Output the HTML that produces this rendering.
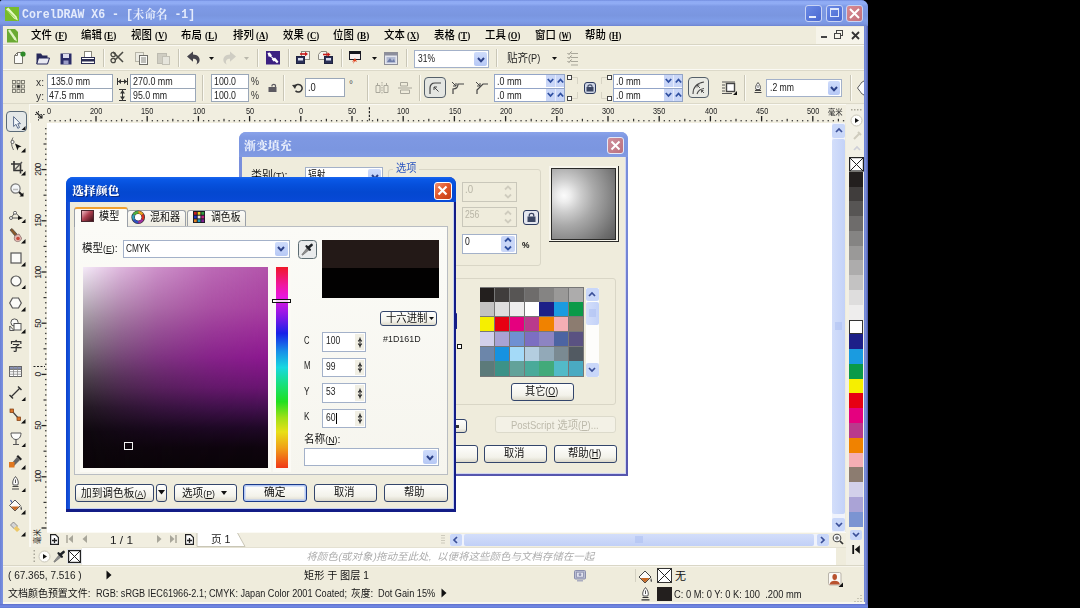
<!DOCTYPE html><html><head><meta charset="utf-8"><title>CorelDRAW X6</title><style>
*{box-sizing:border-box;margin:0;padding:0}
html,body{width:1080px;height:608px;overflow:hidden;background:#000}
body{position:relative;font-family:"Liberation Sans","Noto Sans CJK SC",sans-serif;font-size:11px;color:#111}
.a{position:absolute}
.t{position:absolute;white-space:nowrap;line-height:1}
.cj{font-family:"Liberation Sans","Noto Sans CJK SC",sans-serif}
.inp{position:absolute;background:#fff;border:1px solid #9aa7b8;font-size:11px;line-height:13px;padding-left:3px;white-space:nowrap;overflow:hidden;color:#222}
.btn{position:absolute;border:1px solid #33456b;border-radius:3px;background:linear-gradient(#fefefd,#f3f2ea 70%,#dcd9cb);text-align:center;white-space:nowrap;font-size:12px;color:#111}
.sep{position:absolute;width:1px;background:#c9c6b6}
</style></head><body>
<div class="a" style="left:0px;top:0px;width:868px;height:608px;background:#6f86d8;border-radius:3px 7px 0 0"></div>
<div class="a" style="left:0px;top:0px;width:868px;height:26px;border-radius:3px 7px 0 0;background:linear-gradient(#6a84d8 0%,#8eaaf4 4%,#90acf4 14%,#7e9ae6 24%,#7a96e0 60%,#7f9de8 80%,#7b95e0 92%,#6c84d2 100%)"></div>
<div class="a" style="left:3px;top:26px;width:861px;height:578px;background:#efecdc"></div>
<div class="t" style="left:22.4px;top:7.5px;font-size:12px;font-family:'Liberation Mono',monospace;font-weight:bold;color:#e4ebfc;transform-origin:0 50%;transform:scaleX(0.962)">CorelDRAW X6 - [<span style="font-family:'Liberation Serif','Noto Serif CJK SC',serif;font-size:12px;position:relative;top:1px">未命名</span> -1]</div>
<svg class="a" style="left:5px;top:6.5px;" width="14" height="14" viewBox="0 0 14 14"><rect width="14" height="14" fill="#78bc2a"/><path d="M1 2.200L3.300 0.500L11.500 9.500L13 13.500L9 11.500Z" fill="#e9fbc6"/><path d="M2.500 3.500L10.500 11" stroke="#8fcf3c" stroke-width="0.900"/></svg>
<div class="a" style="left:805px;top:5px;width:17px;height:17px;border:1px solid #c9d4f4;border-radius:3px;background:linear-gradient(135deg,#6a8ae6,#4a68d0)"><div class="a" style="left:3px;top:10px;width:7px;height:2px;background:#e8eefc"></div></div>
<div class="a" style="left:826px;top:5px;width:17px;height:17px;border:1px solid #c9d4f4;border-radius:3px;background:linear-gradient(135deg,#6a8ae6,#4a68d0)"><div class="a" style="left:3px;top:2px;width:9px;height:9px;border:1px solid #dfe7fb;border-top-width:2px"></div></div>
<div class="a" style="left:846px;top:5px;width:17px;height:17px;border:1px solid #c9d4f4;border-radius:3px;background:linear-gradient(135deg,#d98a92,#c2707c)"><svg class="a" style="left:2px;top:2px" width="11" height="11"><path d="M1 1L10 10M10 1L1 10" stroke="#fff" stroke-width="2"/></svg></div>
<div class="a" style="left:3px;top:26px;width:861px;height:18px;background:#efecdc"></div>
<div class="a" style="left:816px;top:27px;width:48px;height:17px;background:#f6f4ea"></div>
<svg class="a" style="left:7px;top:29px;" width="11" height="13.5" viewBox="0 0 11 13.5"><path d="M0 0H8L11 3V13.500H0Z" fill="#6aaa32"/><path d="M1 1.500L3 0.500L9 9L10 12.500L7 10.500Z" fill="#dff3c0"/></svg>
<div class="t" style="left:31.1px;top:30px;font-size:11.5px;color:#000;font-weight:500;transform-origin:0 50%;transform:scaleX(0.904)">文件</div>
<div class="t" style="left:54.6px;top:30.5px;font-size:10px;color:#000;font-family:'Liberation Serif',serif;font-weight:bold;transform-origin:0 50%;transform:scaleX(0.953)">(<u>F</u>)</div>
<div class="t" style="left:80.6px;top:30px;font-size:11.5px;color:#000;font-weight:500;transform-origin:0 50%;transform:scaleX(0.904)">编辑</div>
<div class="t" style="left:104.1px;top:30.5px;font-size:10px;color:#000;font-family:'Liberation Serif',serif;font-weight:bold;transform-origin:0 50%;transform:scaleX(0.913)">(<u>E</u>)</div>
<div class="t" style="left:131px;top:30px;font-size:11.5px;color:#000;font-weight:500;transform-origin:0 50%;transform:scaleX(0.904)">视图</div>
<div class="t" style="left:154.5px;top:30.5px;font-size:10px;color:#000;font-family:'Liberation Serif',serif;font-weight:bold;transform-origin:0 50%;transform:scaleX(0.876)">(<u>V</u>)</div>
<div class="t" style="left:181.3px;top:30px;font-size:11.5px;color:#000;font-weight:500;transform-origin:0 50%;transform:scaleX(0.904)">布局</div>
<div class="t" style="left:204.8px;top:30.5px;font-size:10px;color:#000;font-family:'Liberation Serif',serif;font-weight:bold;transform-origin:0 50%;transform:scaleX(0.913)">(<u>L</u>)</div>
<div class="t" style="left:232.6px;top:30px;font-size:11.5px;color:#000;font-weight:500;transform-origin:0 50%;transform:scaleX(0.904)">排列</div>
<div class="t" style="left:256.1px;top:30.5px;font-size:10px;color:#000;font-family:'Liberation Serif',serif;font-weight:bold;transform-origin:0 50%;transform:scaleX(0.876)">(<u>A</u>)</div>
<div class="t" style="left:283px;top:30px;font-size:11.5px;color:#000;font-weight:500;transform-origin:0 50%;transform:scaleX(0.904)">效果</div>
<div class="t" style="left:306.5px;top:30.5px;font-size:10px;color:#000;font-family:'Liberation Serif',serif;font-weight:bold;transform-origin:0 50%;transform:scaleX(0.876)">(<u>C</u>)</div>
<div class="t" style="left:333.4px;top:30px;font-size:11.5px;color:#000;font-weight:500;transform-origin:0 50%;transform:scaleX(0.904)">位图</div>
<div class="t" style="left:356.9px;top:30.5px;font-size:10px;color:#000;font-family:'Liberation Serif',serif;font-weight:bold;transform-origin:0 50%;transform:scaleX(0.913)">(<u>B</u>)</div>
<div class="t" style="left:383.8px;top:30px;font-size:11.5px;color:#000;font-weight:500;transform-origin:0 50%;transform:scaleX(0.904)">文本</div>
<div class="t" style="left:407.3px;top:30.5px;font-size:10px;color:#000;font-family:'Liberation Serif',serif;font-weight:bold;transform-origin:0 50%;transform:scaleX(0.876)">(<u>X</u>)</div>
<div class="t" style="left:434.2px;top:30px;font-size:11.5px;color:#000;font-weight:500;transform-origin:0 50%;transform:scaleX(0.904)">表格</div>
<div class="t" style="left:457.7px;top:30.5px;font-size:10px;color:#000;font-family:'Liberation Serif',serif;font-weight:bold;transform-origin:0 50%;transform:scaleX(0.913)">(<u>T</u>)</div>
<div class="t" style="left:484.6px;top:30px;font-size:11.5px;color:#000;font-weight:500;transform-origin:0 50%;transform:scaleX(0.904)">工具</div>
<div class="t" style="left:508.1px;top:30.5px;font-size:10px;color:#000;font-family:'Liberation Serif',serif;font-weight:bold;transform-origin:0 50%;transform:scaleX(0.843)">(<u>O</u>)</div>
<div class="t" style="left:535px;top:30px;font-size:11.5px;color:#000;font-weight:500;transform-origin:0 50%;transform:scaleX(0.904)">窗口</div>
<div class="t" style="left:558.5px;top:30.5px;font-size:10px;color:#000;font-family:'Liberation Serif',serif;font-weight:bold;transform-origin:0 50%;transform:scaleX(0.731)">(<u>W</u>)</div>
<div class="t" style="left:585.4px;top:30px;font-size:11.5px;color:#000;font-weight:500;transform-origin:0 50%;transform:scaleX(0.904)">帮助</div>
<div class="t" style="left:608.9px;top:30.5px;font-size:10px;color:#000;font-family:'Liberation Serif',serif;font-weight:bold;transform-origin:0 50%;transform:scaleX(0.843)">(<u>H</u>)</div>
<div class="a" style="left:821px;top:36px;width:6px;height:2px;background:#444"></div>
<svg class="a" style="left:834px;top:30px" width="10" height="10"><rect x="2.5" y="0.5" width="6" height="5" fill="none" stroke="#444"/><rect x="0.5" y="3.5" width="6" height="5" fill="#f6f4ea" stroke="#444"/></svg>
<svg class="a" style="left:851px;top:31px" width="9" height="9"><path d="M1 1L8 8M8 1L1 8" stroke="#333" stroke-width="1.8"/></svg>
<div class="a" style="left:3px;top:44px;width:861px;height:1px;background:#d8d5c4"></div>
<div class="a" style="left:3px;top:45px;width:861px;height:1px;background:#fbfaf4"></div>
<svg class="a" style="left:13px;top:51px;" width="13" height="14" viewBox="0 0 13 14"><path d="M1.5 4.5L4.5 1.5H9.5V12.5H1.5Z" fill="#fbfbf8" stroke="#77756c"/><path d="M1.5 4.5H4.5V1.5" fill="none" stroke="#77756c"/><circle cx="10" cy="3" r="2.6" fill="#2f8a2a"/></svg>
<svg class="a" style="left:36px;top:52px;" width="14" height="13" viewBox="0 0 14 13"><path d="M0.5 1.5H5L6.5 3.5H11.5V12H0.5Z" fill="#27295a"/><path d="M2.5 6H13.5L11.5 12H0.8Z" fill="#e9e9f2" stroke="#27295a"/></svg>
<svg class="a" style="left:60px;top:53px;" width="12" height="12" viewBox="0 0 12 12"><rect x="0.5" y="0.5" width="11" height="11" fill="#2a2c68"/><rect x="3" y="1" width="6" height="4" fill="#dcdcee"/><rect x="3.5" y="7.5" width="5" height="4" fill="#9a9cc8"/></svg>
<svg class="a" style="left:81px;top:51px;" width="14" height="14" viewBox="0 0 14 14"><rect x="3.5" y="0.5" width="7" height="6" fill="#fff" stroke="#8a887c"/><rect x="0.5" y="6.5" width="13" height="6" fill="#fdfdfb" stroke="#2a2c52"/><rect x="1" y="8" width="12" height="2.5" fill="#2a2c52"/></svg>
<div class="sep" style="left:103px;top:49px;height:18px"></div><div class="sep" style="left:104px;top:49px;height:18px;background:#fbfaf3"></div>
<svg class="a" style="left:110px;top:51px;" width="16" height="13" viewBox="0 0 16 13"><path d="M3 1L13 11M13 1L5 9" stroke="#4a4a44" stroke-width="1.6" fill="none"/><circle cx="3.2" cy="9.5" r="2.2" fill="none" stroke="#4a4a44" stroke-width="1.3"/><circle cx="3.2" cy="3.5" r="2.2" fill="none" stroke="#4a4a44" stroke-width="1.3"/></svg>
<svg class="a" style="left:135px;top:52px;" width="14" height="13" viewBox="0 0 14 13"><rect x="0.5" y="0.5" width="8" height="9" fill="#ecebe2" stroke="#b7b5a8"/><rect x="4.5" y="3.5" width="8" height="9" fill="#fafaf6" stroke="#6f6e68"/><path d="M6 6H11M6 8H11M6 10H11" stroke="#77766f" stroke-width="0.9"/></svg>
<svg class="a" style="left:157px;top:52px;" width="14" height="13" viewBox="0 0 14 13"><rect x="0.5" y="1.5" width="9" height="10" fill="#cfcdc2" stroke="#bdbbb0"/><rect x="5.5" y="4.5" width="7" height="8" fill="#e6e5dc" stroke="#c2c0b5"/></svg>
<div class="sep" style="left:178px;top:49px;height:18px"></div><div class="sep" style="left:179px;top:49px;height:18px;background:#fbfaf3"></div>
<svg class="a" style="left:186px;top:51px;" width="16" height="14" viewBox="0 0 16 14"><path d="M1 5.5L7 0.5V3.6C11.5 3.6 14 6.4 13.6 9.5C13.3 11.6 12 12.9 10.2 13.4C11.2 12.2 11.4 10.6 10.6 9.3C9.9 8.1 8.6 7.7 7 7.7V10.8Z" fill="#46444c"/></svg>
<svg class="a" style="left:209px;top:57px;" width="5" height="3" viewBox="0 0 5 3"><path d="M0 0H5L2.5 3Z" fill="#111"/></svg>
<svg class="a" style="left:221px;top:51px;" width="16" height="14" viewBox="0 0 16 14"><path d="M15 5.5L9 0.5V3.6C4.5 3.6 2 6.4 2.4 9.5C2.7 11.6 4 12.9 5.8 13.4C4.8 12.2 4.6 10.6 5.4 9.3C6.1 8.1 7.4 7.7 9 7.7V10.8Z" fill="#cfcdc3"/></svg>
<svg class="a" style="left:244px;top:57px;" width="5" height="3" viewBox="0 0 5 3"><path d="M0 0H5L2.5 3Z" fill="#b9b7ab"/></svg>
<div class="sep" style="left:257px;top:49px;height:18px"></div><div class="sep" style="left:258px;top:49px;height:18px;background:#fbfaf3"></div>
<svg class="a" style="left:265.8px;top:51.3px;" width="14" height="13.5" viewBox="0 0 14 13.5"><rect width="14" height="13.500" fill="#3c2082"/><path d="M1.500 2L3.800 1.500L6 4.500L5.200 5.300L8 7.300L9 6.500L12.500 10.800L11 12.300L8.500 10L7.600 10.500L5.600 8L6.400 7.200L3.600 5.500L2.700 5.700Z" fill="#fff"/></svg>
<div class="sep" style="left:288px;top:49px;height:18px"></div><div class="sep" style="left:289px;top:49px;height:18px;background:#fbfaf3"></div>
<svg class="a" style="left:296px;top:51px;" width="15" height="14" viewBox="0 0 15 14"><rect x="5.5" y="0.5" width="8" height="8" fill="#f4f4f0" stroke="#8c8a80"/><rect x="0.5" y="5.5" width="8" height="7" fill="#2a3058" stroke="#20243f"/><rect x="2" y="7" width="5" height="2.5" fill="#d8dcec"/><path d="M4 3H10" stroke="#c81a1a" stroke-width="1.6"/><path d="M9 0.8L12 3L9 5.2Z" fill="#c81a1a"/></svg>
<svg class="a" style="left:318px;top:51px;" width="15" height="14" viewBox="0 0 15 14"><path d="M0.5 3.5L3 0.5H8.5V8.5H0.5Z" fill="#f4f4f0" stroke="#8c8a80"/><rect x="6.500" y="5.5" width="8" height="7" fill="#2a3058" stroke="#20243f"/><rect x="8" y="7" width="5" height="2.5" fill="#d8dcec"/><path d="M5 3.500H10" stroke="#c81a1a" stroke-width="1.6"/><path d="M9.500 1.200L12.500 3.500L9.500 5.800Z" fill="#c81a1a"/></svg>
<div class="sep" style="left:341px;top:49px;height:18px"></div><div class="sep" style="left:342px;top:49px;height:18px;background:#fbfaf3"></div>
<svg class="a" style="left:349px;top:51px;" width="12" height="14" viewBox="0 0 12 14"><rect x="0.5" y="0.5" width="11" height="8" fill="#f7eef0" stroke="#1c1c28"/><rect x="0" y="0" width="12" height="3" fill="#15151f"/><path d="M6 7L8 11L6 10L4 13L5 10L3 11Z" fill="#e0401c"/></svg>
<svg class="a" style="left:372px;top:57px;" width="5" height="3" viewBox="0 0 5 3"><path d="M0 0H5L2.5 3Z" fill="#111"/></svg>
<svg class="a" style="left:384px;top:52px;" width="14" height="13" viewBox="0 0 14 13"><rect x="0.5" y="0.5" width="13" height="12" fill="#e4e6ee" stroke="#8e8f98"/><rect x="1" y="1" width="12" height="2.5" fill="#8c8e9c"/><rect x="2.500" y="5" width="9" height="6" fill="#b3bbd3"/><path d="M3 10L6 6L8 9L10 7L11 10Z" fill="#6f7da8"/></svg>
<div class="sep" style="left:406px;top:49px;height:18px"></div><div class="sep" style="left:407px;top:49px;height:18px;background:#fbfaf3"></div>
<div class="inp" style="left:414px;top:50px;width:75px;height:18px;border-color:#a3b1c9"></div>
<div class="t" style="left:417.6px;top:54.0px;font-size:10px;color:#222;transform-origin:0 50%;transform:scaleX(0.844)">31%</div>
<div class="a" style="left:474px;top:52px;width:13px;height:14px;background:linear-gradient(#cfdcfb,#b6c8f5);border-radius:2px"></div>
<svg class="a" style="left:476.5px;top:56.5px;" width="8" height="6" viewBox="0 0 8 6"><path d="M1 1L4 4.300L7 1" fill="none" stroke="#2a3f86" stroke-width="2"/></svg>
<div class="sep" style="left:496px;top:49px;height:18px"></div><div class="sep" style="left:497px;top:49px;height:18px;background:#fbfaf3"></div>
<div class="t" style="left:506.7px;top:53.0px;font-size:11.5px;color:#222;transform-origin:0 50%;transform:scaleX(0.916)">贴齐<span style="font-size:10px">(P)</span></div>
<svg class="a" style="left:552px;top:57px;" width="5" height="3" viewBox="0 0 5 3"><path d="M0 0H5L2.5 3Z" fill="#111"/></svg>
<svg class="a" style="left:567px;top:51px;" width="12" height="15" viewBox="0 0 12 15"><path d="M4 2.500H11M4 6.500H11M4 10.500H11M4 14H11" stroke="#a9a79a" stroke-width="1"/><path d="M0.5 2L2 3.500L4.500 0.5M0.5 6L2 7.500L4.500 4.500M0.5 10L2 11.500L4.500 8.500" stroke="#8d8b80" stroke-width="1" fill="none"/></svg>
<div class="a" style="left:3px;top:69px;width:861px;height:1px;background:#fbfaf4"></div>
<div class="a" style="left:3px;top:70px;width:861px;height:1px;background:#dcd9c9"></div>
<svg class="a" style="left:12px;top:80px;" width="13" height="14" viewBox="0 0 13 14"><rect x="0.5" y="0.5" width="3" height="3" fill="none" stroke="#77756c" stroke-width="0.9"/><rect x="5.0" y="0.5" width="3" height="3" fill="none" stroke="#77756c" stroke-width="0.9"/><rect x="9.5" y="0.5" width="3" height="3" fill="none" stroke="#77756c" stroke-width="0.9"/><rect x="0.5" y="5.0" width="3" height="3" fill="none" stroke="#77756c" stroke-width="0.9"/><rect x="5.0" y="5.0" width="3" height="3" fill="#222" stroke="#77756c" stroke-width="0.9"/><rect x="9.5" y="5.0" width="3" height="3" fill="none" stroke="#77756c" stroke-width="0.9"/><rect x="0.5" y="9.5" width="3" height="3" fill="none" stroke="#77756c" stroke-width="0.9"/><rect x="5.0" y="9.5" width="3" height="3" fill="none" stroke="#77756c" stroke-width="0.9"/><rect x="9.5" y="9.5" width="3" height="3" fill="none" stroke="#77756c" stroke-width="0.9"/></svg>
<div class="t" style="left:36px;top:77.0px;font-size:10.5px;color:#333;transform-origin:0 50%;transform:scaleX(0.979)">x:</div>
<div class="t" style="left:36px;top:91.2px;font-size:10.5px;color:#333;transform-origin:0 50%;transform:scaleX(0.979)">y:</div>
<div class="inp" style="left:47px;top:74px;width:66px;height:15px;"></div>
<div class="t" style="left:50.6px;top:77.2px;font-size:10px;color:#222;transform-origin:0 50%;transform:scaleX(0.877)">135.0 mm</div>
<div class="inp" style="left:47px;top:88px;width:66px;height:14px;"></div>
<div class="t" style="left:49.4px;top:91.4px;font-size:10px;color:#222;transform-origin:0 50%;transform:scaleX(0.900)">47.5 mm</div>
<svg class="a" style="left:117px;top:78px;" width="11" height="7" viewBox="0 0 11 7"><path d="M0.5 0V7M10.500 0V7M1 3.500H10" stroke="#333" stroke-width="1"/><path d="M1 3.500L4 1V6ZM10 3.500L7 1V6Z" fill="#333"/></svg>
<svg class="a" style="left:119px;top:89px;" width="7" height="12" viewBox="0 0 7 12"><path d="M0 0.5H7M0 11.500H7M3.500 1V11" stroke="#333" stroke-width="1"/><path d="M3.500 1L1 4.500H6ZM3.500 11L1 7.500H6Z" fill="#333"/></svg>
<div class="inp" style="left:130px;top:74px;width:66px;height:15px;"></div>
<div class="t" style="left:133.3px;top:77.2px;font-size:10px;color:#222;transform-origin:0 50%;transform:scaleX(0.893)">270.0 mm</div>
<div class="inp" style="left:130px;top:88px;width:66px;height:14px;"></div>
<div class="t" style="left:133.3px;top:91.4px;font-size:10px;color:#222;transform-origin:0 50%;transform:scaleX(0.879)">95.0 mm</div>
<div class="sep" style="left:202px;top:75px;height:26px"></div><div class="sep" style="left:203px;top:75px;height:26px;background:#fbfaf3"></div>
<div class="inp" style="left:211px;top:74px;width:38px;height:15px;"></div>
<div class="t" style="left:214px;top:77.2px;font-size:10px;color:#222;transform-origin:0 50%;transform:scaleX(0.879)">100.0</div>
<div class="inp" style="left:211px;top:88px;width:38px;height:14px;"></div>
<div class="t" style="left:214px;top:91.4px;font-size:10px;color:#222;transform-origin:0 50%;transform:scaleX(0.879)">100.0</div>
<div class="t" style="left:251px;top:76.2px;font-size:11px;color:#333;transform-origin:0 50%;transform:scaleX(0.818)">%</div>
<div class="t" style="left:251px;top:90.2px;font-size:11px;color:#333;transform-origin:0 50%;transform:scaleX(0.818)">%</div>
<svg class="a" style="left:268px;top:83px;" width="9" height="9" viewBox="0 0 9 9"><rect x="0.5" y="4" width="8" height="5" fill="#5b5960"/><path d="M4 3.500V2.500C4 1 7.500 1 7.500 2.500V4" fill="none" stroke="#5b5960" stroke-width="1.2"/></svg>
<div class="sep" style="left:283px;top:75px;height:26px"></div><div class="sep" style="left:284px;top:75px;height:26px;background:#fbfaf3"></div>
<svg class="a" style="left:292px;top:82px;" width="11" height="11" viewBox="0 0 11 11"><path d="M3 4.500A3.800 3.800 0 1 1 3.500 8.800" fill="none" stroke="#333" stroke-width="1.500"/><path d="M0 3L5 2.500L3 7Z" fill="#333"/></svg>
<div class="inp" style="left:305px;top:78px;width:40px;height:19px;"></div>
<div class="t" style="left:308.2px;top:82.5px;font-size:10px;color:#222;transform-origin:0 50%;transform:scaleX(0.935)">.0</div>
<div class="t" style="left:349px;top:80px;font-size:10px;color:#555">°</div>
<div class="sep" style="left:367px;top:75px;height:26px"></div><div class="sep" style="left:368px;top:75px;height:26px;background:#fbfaf3"></div>
<svg class="a" style="left:375px;top:82px;" width="14" height="12" viewBox="0 0 14 12"><path d="M7 0V12" stroke="#a9a79b" stroke-dasharray="1.500 1"/><path d="M1 3.500H5V10.500H1ZM9 3.500H13V10.500H9Z" fill="none" stroke="#a9a79b"/><path d="M2.500 3V1M11.500 3V1" stroke="#a9a79b"/></svg>
<svg class="a" style="left:398px;top:82px;" width="14" height="12" viewBox="0 0 14 12"><path d="M0 6H14" stroke="#a9a79b"/><path d="M2.500 0.5H9.500V4H2.500ZM2.500 8H11.500V11.500H2.500Z" fill="none" stroke="#a9a79b"/></svg>
<div class="sep" style="left:419px;top:75px;height:26px"></div><div class="sep" style="left:420px;top:75px;height:26px;background:#fbfaf3"></div>
<div class="a" style="left:424px;top:77px;width:22px;height:21px;border:1.500px solid #55606a;border-radius:4px;background:#e4e6e2"></div>
<svg class="a" style="left:429px;top:82px;" width="13" height="12" viewBox="0 0 13 12"><path d="M1 12V6C1 3 3 1 6 1H12" fill="none" stroke="#444" stroke-width="1.200"/><path d="M5 5L9.500 9.500M5 5V8M5 5H8" stroke="#444" stroke-width="1" fill="none"/></svg>
<svg class="a" style="left:451px;top:81px;" width="14" height="14" viewBox="0 0 14 14"><path d="M2 13V8C5 8 7 6 7 3H13" fill="none" stroke="#444" stroke-width="1.200"/><path d="M1 1L5 5M5 2V5H2" stroke="#444" fill="none"/></svg>
<svg class="a" style="left:475px;top:81px;" width="14" height="14" viewBox="0 0 14 14"><path d="M2 13V9L8 3H13" fill="none" stroke="#444" stroke-width="1.200"/><path d="M1 1L5 5M5 2V5H2" stroke="#444" fill="none"/></svg>
<div class="a" style="left:494px;top:74px;width:71px;height:28px;border:1px solid #93a5c8;background:#fff"></div>
<div class="a" style="left:494px;top:88px;width:71px;height:1px;background:#93a5c8"></div>
<div class="t" style="left:497.3px;top:77.2px;font-size:10px;color:#222;transform-origin:0 50%;transform:scaleX(0.889)">.0 mm</div>
<div class="a" style="left:546px;top:75px;width:18px;height:12px;background:#c9d6f7"></div>
<div class="a" style="left:555px;top:75px;width:1px;height:12px;background:#e6ecfb"></div>
<svg class="a" style="left:547px;top:78px;" width="7" height="6" viewBox="0 0 7 6"><path d="M0.800 1L3.500 4L6.200 1" fill="none" stroke="#2f4fa0" stroke-width="1.800"/></svg>
<svg class="a" style="left:556.5px;top:78px;" width="7" height="6" viewBox="0 0 7 6"><path d="M0.800 4.500L3.500 1.500L6.200 4.500" fill="none" stroke="#2f4fa0" stroke-width="1.800"/></svg>
<div class="t" style="left:497.3px;top:91.4px;font-size:10px;color:#222;transform-origin:0 50%;transform:scaleX(0.889)">.0 mm</div>
<div class="a" style="left:546px;top:89px;width:18px;height:12px;background:#c9d6f7"></div>
<div class="a" style="left:555px;top:89px;width:1px;height:12px;background:#e6ecfb"></div>
<svg class="a" style="left:547px;top:92px;" width="7" height="6" viewBox="0 0 7 6"><path d="M0.800 1L3.500 4L6.200 1" fill="none" stroke="#2f4fa0" stroke-width="1.800"/></svg>
<svg class="a" style="left:556.5px;top:92px;" width="7" height="6" viewBox="0 0 7 6"><path d="M0.800 4.500L3.500 1.500L6.200 4.500" fill="none" stroke="#2f4fa0" stroke-width="1.800"/></svg>
<svg class="a" style="left:567px;top:74px;" width="11" height="28" viewBox="0 0 11 28"><rect x="0.5" y="1.500" width="4" height="4" fill="#fff" stroke="#444"/><path d="M5 3.500H10.500V10" fill="none" stroke="#d6d3c4"/><rect x="0.5" y="22.500" width="4" height="4" fill="#fff" stroke="#444"/><path d="M5 24.500H10.500V18" fill="none" stroke="#d6d3c4"/></svg>
<div class="a" style="left:584px;top:82px;width:12px;height:12px;border:1px solid #2d3b5e;border-radius:3px;background:#cfd6e6"></div>
<svg class="a" style="left:586px;top:84px;" width="8" height="8" viewBox="0 0 8 8"><rect x="0.5" y="3" width="7" height="4.500" fill="#3b4663"/><path d="M2 3V2C2 0.5 6 0.5 6 2V3" fill="none" stroke="#3b4663" stroke-width="1.100"/></svg>
<svg class="a" style="left:601px;top:74px;" width="11" height="28" viewBox="0 0 11 28"><rect x="6.500" y="1.500" width="4" height="4" fill="#fff" stroke="#444"/><path d="M6 3.500H0.500V10" fill="none" stroke="#d6d3c4"/><rect x="6.500" y="22.500" width="4" height="4" fill="#fff" stroke="#444"/><path d="M6 24.500H0.500V18" fill="none" stroke="#d6d3c4"/></svg>
<div class="a" style="left:613px;top:74px;width:70px;height:28px;border:1px solid #93a5c8;background:#fff"></div>
<div class="a" style="left:613px;top:88px;width:70px;height:1px;background:#93a5c8"></div>
<div class="t" style="left:616.3px;top:77.2px;font-size:10px;color:#222;transform-origin:0 50%;transform:scaleX(0.889)">.0 mm</div>
<div class="a" style="left:664px;top:75px;width:18px;height:12px;background:#c9d6f7"></div>
<div class="a" style="left:673px;top:75px;width:1px;height:12px;background:#e6ecfb"></div>
<svg class="a" style="left:665px;top:78px;" width="7" height="6" viewBox="0 0 7 6"><path d="M0.800 1L3.500 4L6.200 1" fill="none" stroke="#2f4fa0" stroke-width="1.800"/></svg>
<svg class="a" style="left:674.5px;top:78px;" width="7" height="6" viewBox="0 0 7 6"><path d="M0.800 4.500L3.500 1.500L6.200 4.500" fill="none" stroke="#2f4fa0" stroke-width="1.800"/></svg>
<div class="t" style="left:616.3px;top:91.4px;font-size:10px;color:#222;transform-origin:0 50%;transform:scaleX(0.889)">.0 mm</div>
<div class="a" style="left:664px;top:89px;width:18px;height:12px;background:#c9d6f7"></div>
<div class="a" style="left:673px;top:89px;width:1px;height:12px;background:#e6ecfb"></div>
<svg class="a" style="left:665px;top:92px;" width="7" height="6" viewBox="0 0 7 6"><path d="M0.800 1L3.500 4L6.200 1" fill="none" stroke="#2f4fa0" stroke-width="1.800"/></svg>
<svg class="a" style="left:674.5px;top:92px;" width="7" height="6" viewBox="0 0 7 6"><path d="M0.800 4.500L3.500 1.500L6.200 4.500" fill="none" stroke="#2f4fa0" stroke-width="1.800"/></svg>
<div class="a" style="left:688px;top:77px;width:21px;height:21px;border:1.500px solid #55606a;border-radius:4px;background:#e9eae4"></div>
<svg class="a" style="left:692px;top:81px;" width="14" height="14" viewBox="0 0 14 14"><path d="M1 13C1 6 5 2 12 1" fill="none" stroke="#444" stroke-width="1.100"/><path d="M5 13C6 10 8 8 12 7.500" fill="none" stroke="#444" stroke-width="1.100"/><path d="M5 4L8 7M5 4H7.500M5 4V6.500M9.500 9.500L12 12M9.500 9.500H11.500M9.500 9.500V11.500" stroke="#444" stroke-width="0.900" fill="none"/></svg>
<svg class="a" style="left:722px;top:81px;" width="15" height="14" viewBox="0 0 15 14"><rect x="4.500" y="2.500" width="8" height="8" fill="#fff" stroke="#444" stroke-width="1.400"/><path d="M0 1H13M0 4H3M0 7H3M0 10H3M0 12.500H10" stroke="#555" stroke-width="1"/><path d="M15 10V14H11Z" fill="#111"/></svg>
<div class="sep" style="left:744px;top:75px;height:26px"></div><div class="sep" style="left:745px;top:75px;height:26px;background:#fbfaf3"></div>
<svg class="a" style="left:754px;top:82px;" width="8" height="11" viewBox="0 0 8 11"><path d="M4 0.500C6 3 7 5 6 7.500H2C1 5 2 3 4 0.500Z" fill="#fff" stroke="#444" stroke-width="0.900"/><path d="M4 3V6" stroke="#444" stroke-width="0.800"/><path d="M1 8.500H7M0.500 10.500H7.500" stroke="#444" stroke-width="1"/></svg>
<div class="inp" style="left:766px;top:79px;width:76px;height:18px;border-color:#a3b1c9"></div>
<div class="t" style="left:769.6px;top:83.2px;font-size:10px;color:#222;transform-origin:0 50%;transform:scaleX(0.864)">.2 mm</div>
<div class="a" style="left:828px;top:81px;width:12px;height:14px;background:linear-gradient(#cfdcfb,#b6c8f5);border-radius:2px"></div>
<svg class="a" style="left:830.0px;top:85.5px;" width="8" height="6" viewBox="0 0 8 6"><path d="M1 1L4 4.300L7 1" fill="none" stroke="#2a3f86" stroke-width="2"/></svg>
<div class="sep" style="left:850px;top:75px;height:26px"></div><div class="sep" style="left:851px;top:75px;height:26px;background:#fbfaf3"></div>
<svg class="a" style="left:857px;top:80px;" width="7" height="16" viewBox="0 0 7 16"><path d="M7 1C4 2 4 4 2 6L0.500 8L2 10C4 12 4 14 7 15" fill="#fff" stroke="#555"/></svg>
<div class="a" style="left:3px;top:103px;width:861px;height:1px;background:#dcd9c9"></div>
<div class="a" style="left:46.5px;top:122.7px;width:786px;height:409.3px;background:#fff"></div>
<div class="a" style="left:30px;top:104px;width:816.2px;height:19px;background:#f1eee0"></div>
<div class="a" style="left:30px;top:104px;width:816.2px;height:1px;background:#fbfaf4"></div>
<svg class="a" style="left:30px;top:104px;" width="818" height="19" viewBox="0 0 818 19"><rect x="19.3" y="16" width="1.300" height="1.400" fill="#444"/><rect x="24.4" y="16" width="1.300" height="1.400" fill="#444"/><rect x="29.6" y="16" width="1.300" height="1.400" fill="#444"/><rect x="34.7" y="16" width="1.300" height="1.400" fill="#444"/><rect x="39.8" y="14.800" width="1.200" height="2.600" fill="#333"/><rect x="44.9" y="16" width="1.300" height="1.400" fill="#444"/><rect x="50.0" y="16" width="1.300" height="1.400" fill="#444"/><rect x="55.2" y="16" width="1.300" height="1.400" fill="#444"/><rect x="60.3" y="16" width="1.300" height="1.400" fill="#444"/><path d="M66.0 12V17.400" stroke="#222" stroke-width="1.300"/><rect x="70.5" y="16" width="1.300" height="1.400" fill="#444"/><rect x="75.6" y="16" width="1.300" height="1.400" fill="#444"/><rect x="80.8" y="16" width="1.300" height="1.400" fill="#444"/><rect x="85.9" y="16" width="1.300" height="1.400" fill="#444"/><rect x="91.0" y="14.800" width="1.200" height="2.600" fill="#333"/><rect x="96.1" y="16" width="1.300" height="1.400" fill="#444"/><rect x="101.2" y="16" width="1.300" height="1.400" fill="#444"/><rect x="106.4" y="16" width="1.300" height="1.400" fill="#444"/><rect x="111.5" y="16" width="1.300" height="1.400" fill="#444"/><path d="M117.2 12V17.400" stroke="#222" stroke-width="1.300"/><rect x="121.7" y="16" width="1.300" height="1.400" fill="#444"/><rect x="126.8" y="16" width="1.300" height="1.400" fill="#444"/><rect x="132.0" y="16" width="1.300" height="1.400" fill="#444"/><rect x="137.1" y="16" width="1.300" height="1.400" fill="#444"/><rect x="142.2" y="14.800" width="1.200" height="2.600" fill="#333"/><rect x="147.3" y="16" width="1.300" height="1.400" fill="#444"/><rect x="152.4" y="16" width="1.300" height="1.400" fill="#444"/><rect x="157.6" y="16" width="1.300" height="1.400" fill="#444"/><rect x="162.7" y="16" width="1.300" height="1.400" fill="#444"/><path d="M168.4 12V17.400" stroke="#222" stroke-width="1.300"/><rect x="172.9" y="16" width="1.300" height="1.400" fill="#444"/><rect x="178.0" y="16" width="1.300" height="1.400" fill="#444"/><rect x="183.2" y="16" width="1.300" height="1.400" fill="#444"/><rect x="188.3" y="16" width="1.300" height="1.400" fill="#444"/><rect x="193.4" y="14.800" width="1.200" height="2.600" fill="#333"/><rect x="198.5" y="16" width="1.300" height="1.400" fill="#444"/><rect x="203.6" y="16" width="1.300" height="1.400" fill="#444"/><rect x="208.8" y="16" width="1.300" height="1.400" fill="#444"/><rect x="213.9" y="16" width="1.300" height="1.400" fill="#444"/><path d="M219.6 12V17.400" stroke="#222" stroke-width="1.300"/><rect x="224.1" y="16" width="1.300" height="1.400" fill="#444"/><rect x="229.2" y="16" width="1.300" height="1.400" fill="#444"/><rect x="234.4" y="16" width="1.300" height="1.400" fill="#444"/><rect x="239.5" y="16" width="1.300" height="1.400" fill="#444"/><rect x="244.6" y="14.800" width="1.200" height="2.600" fill="#333"/><rect x="249.7" y="16" width="1.300" height="1.400" fill="#444"/><rect x="254.8" y="16" width="1.300" height="1.400" fill="#444"/><rect x="260.0" y="16" width="1.300" height="1.400" fill="#444"/><rect x="265.1" y="16" width="1.300" height="1.400" fill="#444"/><path d="M270.8 12V17.400" stroke="#222" stroke-width="1.300"/><rect x="275.3" y="16" width="1.300" height="1.400" fill="#444"/><rect x="280.4" y="16" width="1.300" height="1.400" fill="#444"/><rect x="285.6" y="16" width="1.300" height="1.400" fill="#444"/><rect x="290.7" y="16" width="1.300" height="1.400" fill="#444"/><rect x="295.8" y="14.800" width="1.200" height="2.600" fill="#333"/><rect x="300.9" y="16" width="1.300" height="1.400" fill="#444"/><rect x="306.0" y="16" width="1.300" height="1.400" fill="#444"/><rect x="311.2" y="16" width="1.300" height="1.400" fill="#444"/><rect x="316.3" y="16" width="1.300" height="1.400" fill="#444"/><path d="M322.0 12V17.400" stroke="#222" stroke-width="1.300"/><rect x="326.5" y="16" width="1.300" height="1.400" fill="#444"/><rect x="331.6" y="16" width="1.300" height="1.400" fill="#444"/><rect x="336.8" y="16" width="1.300" height="1.400" fill="#444"/><rect x="341.9" y="16" width="1.300" height="1.400" fill="#444"/><rect x="347.0" y="14.800" width="1.200" height="2.600" fill="#333"/><rect x="352.1" y="16" width="1.300" height="1.400" fill="#444"/><rect x="357.2" y="16" width="1.300" height="1.400" fill="#444"/><rect x="362.4" y="16" width="1.300" height="1.400" fill="#444"/><rect x="367.5" y="16" width="1.300" height="1.400" fill="#444"/><path d="M373.2 12V17.400" stroke="#222" stroke-width="1.300"/><rect x="377.7" y="16" width="1.300" height="1.400" fill="#444"/><rect x="382.8" y="16" width="1.300" height="1.400" fill="#444"/><rect x="388.0" y="16" width="1.300" height="1.400" fill="#444"/><rect x="393.1" y="16" width="1.300" height="1.400" fill="#444"/><rect x="398.2" y="14.800" width="1.200" height="2.600" fill="#333"/><rect x="403.3" y="16" width="1.300" height="1.400" fill="#444"/><rect x="408.4" y="16" width="1.300" height="1.400" fill="#444"/><rect x="413.6" y="16" width="1.300" height="1.400" fill="#444"/><rect x="418.7" y="16" width="1.300" height="1.400" fill="#444"/><path d="M424.4 12V17.400" stroke="#222" stroke-width="1.300"/><rect x="428.9" y="16" width="1.300" height="1.400" fill="#444"/><rect x="434.0" y="16" width="1.300" height="1.400" fill="#444"/><rect x="439.2" y="16" width="1.300" height="1.400" fill="#444"/><rect x="444.3" y="16" width="1.300" height="1.400" fill="#444"/><rect x="449.4" y="14.800" width="1.200" height="2.600" fill="#333"/><rect x="454.5" y="16" width="1.300" height="1.400" fill="#444"/><rect x="459.6" y="16" width="1.300" height="1.400" fill="#444"/><rect x="464.8" y="16" width="1.300" height="1.400" fill="#444"/><rect x="469.9" y="16" width="1.300" height="1.400" fill="#444"/><path d="M475.6 12V17.400" stroke="#222" stroke-width="1.300"/><rect x="480.1" y="16" width="1.300" height="1.400" fill="#444"/><rect x="485.2" y="16" width="1.300" height="1.400" fill="#444"/><rect x="490.4" y="16" width="1.300" height="1.400" fill="#444"/><rect x="495.5" y="16" width="1.300" height="1.400" fill="#444"/><rect x="500.6" y="14.800" width="1.200" height="2.600" fill="#333"/><rect x="505.7" y="16" width="1.300" height="1.400" fill="#444"/><rect x="510.8" y="16" width="1.300" height="1.400" fill="#444"/><rect x="516.0" y="16" width="1.300" height="1.400" fill="#444"/><rect x="521.1" y="16" width="1.300" height="1.400" fill="#444"/><path d="M526.8 12V17.400" stroke="#222" stroke-width="1.300"/><rect x="531.3" y="16" width="1.300" height="1.400" fill="#444"/><rect x="536.4" y="16" width="1.300" height="1.400" fill="#444"/><rect x="541.6" y="16" width="1.300" height="1.400" fill="#444"/><rect x="546.7" y="16" width="1.300" height="1.400" fill="#444"/><rect x="551.8" y="14.800" width="1.200" height="2.600" fill="#333"/><rect x="556.9" y="16" width="1.300" height="1.400" fill="#444"/><rect x="562.0" y="16" width="1.300" height="1.400" fill="#444"/><rect x="567.2" y="16" width="1.300" height="1.400" fill="#444"/><rect x="572.3" y="16" width="1.300" height="1.400" fill="#444"/><path d="M578.0 12V17.400" stroke="#222" stroke-width="1.300"/><rect x="582.5" y="16" width="1.300" height="1.400" fill="#444"/><rect x="587.6" y="16" width="1.300" height="1.400" fill="#444"/><rect x="592.8" y="16" width="1.300" height="1.400" fill="#444"/><rect x="597.9" y="16" width="1.300" height="1.400" fill="#444"/><rect x="603.0" y="14.800" width="1.200" height="2.600" fill="#333"/><rect x="608.1" y="16" width="1.300" height="1.400" fill="#444"/><rect x="613.2" y="16" width="1.300" height="1.400" fill="#444"/><rect x="618.4" y="16" width="1.300" height="1.400" fill="#444"/><rect x="623.5" y="16" width="1.300" height="1.400" fill="#444"/><path d="M629.2 12V17.400" stroke="#222" stroke-width="1.300"/><rect x="633.7" y="16" width="1.300" height="1.400" fill="#444"/><rect x="638.8" y="16" width="1.300" height="1.400" fill="#444"/><rect x="644.0" y="16" width="1.300" height="1.400" fill="#444"/><rect x="649.1" y="16" width="1.300" height="1.400" fill="#444"/><rect x="654.2" y="14.800" width="1.200" height="2.600" fill="#333"/><rect x="659.3" y="16" width="1.300" height="1.400" fill="#444"/><rect x="664.4" y="16" width="1.300" height="1.400" fill="#444"/><rect x="669.6" y="16" width="1.300" height="1.400" fill="#444"/><rect x="674.7" y="16" width="1.300" height="1.400" fill="#444"/><path d="M680.4 12V17.400" stroke="#222" stroke-width="1.300"/><rect x="684.9" y="16" width="1.300" height="1.400" fill="#444"/><rect x="690.0" y="16" width="1.300" height="1.400" fill="#444"/><rect x="695.2" y="16" width="1.300" height="1.400" fill="#444"/><rect x="700.3" y="16" width="1.300" height="1.400" fill="#444"/><rect x="705.4" y="14.800" width="1.200" height="2.600" fill="#333"/><rect x="710.5" y="16" width="1.300" height="1.400" fill="#444"/><rect x="715.6" y="16" width="1.300" height="1.400" fill="#444"/><rect x="720.8" y="16" width="1.300" height="1.400" fill="#444"/><rect x="725.9" y="16" width="1.300" height="1.400" fill="#444"/><path d="M731.6 12V17.400" stroke="#222" stroke-width="1.300"/><rect x="736.1" y="16" width="1.300" height="1.400" fill="#444"/><rect x="741.2" y="16" width="1.300" height="1.400" fill="#444"/><rect x="746.4" y="16" width="1.300" height="1.400" fill="#444"/><rect x="751.5" y="16" width="1.300" height="1.400" fill="#444"/><rect x="756.6" y="14.800" width="1.200" height="2.600" fill="#333"/><rect x="761.7" y="16" width="1.300" height="1.400" fill="#444"/><rect x="766.8" y="16" width="1.300" height="1.400" fill="#444"/><rect x="772.0" y="16" width="1.300" height="1.400" fill="#444"/><rect x="777.1" y="16" width="1.300" height="1.400" fill="#444"/><path d="M782.8 12V17.400" stroke="#222" stroke-width="1.300"/><rect x="787.3" y="16" width="1.300" height="1.400" fill="#444"/><rect x="792.4" y="16" width="1.300" height="1.400" fill="#444"/><rect x="797.6" y="16" width="1.300" height="1.400" fill="#444"/><rect x="802.7" y="16" width="1.300" height="1.400" fill="#444"/><rect x="807.8" y="14.800" width="1.200" height="2.600" fill="#333"/><rect x="812.9" y="16" width="1.300" height="1.400" fill="#444"/><path d="M339.400 3.200V16.500" stroke="#222" stroke-width="1.200" stroke-dasharray="2.200 1.600"/></svg>
<div class="t" style="left:47.3px;top:107.4px;font-size:9px;color:#222;transform-origin:0 50%;transform:scaleX(0.817)">0</div>
<div class="t" style="left:90.1px;top:107.4px;font-size:9px;color:#222;transform-origin:0 50%;transform:scaleX(0.818)">200</div>
<div class="t" style="left:141.3px;top:107.4px;font-size:9px;color:#222;transform-origin:0 50%;transform:scaleX(0.818)">150</div>
<div class="t" style="left:192.6px;top:107.4px;font-size:9px;color:#222;transform-origin:0 50%;transform:scaleX(0.818)">100</div>
<div class="t" style="left:245.8px;top:107.4px;font-size:9px;color:#222;transform-origin:0 50%;transform:scaleX(0.819)">50</div>
<div class="t" style="left:299.1px;top:107.4px;font-size:9px;color:#222;transform-origin:0 50%;transform:scaleX(0.817)">0</div>
<div class="t" style="left:348.2px;top:107.4px;font-size:9px;color:#222;transform-origin:0 50%;transform:scaleX(0.819)">50</div>
<div class="t" style="left:397.4px;top:107.4px;font-size:9px;color:#222;transform-origin:0 50%;transform:scaleX(0.818)">100</div>
<div class="t" style="left:448.6px;top:107.4px;font-size:9px;color:#222;transform-origin:0 50%;transform:scaleX(0.818)">150</div>
<div class="t" style="left:499.8px;top:107.4px;font-size:9px;color:#222;transform-origin:0 50%;transform:scaleX(0.818)">200</div>
<div class="t" style="left:550.9px;top:107.4px;font-size:9px;color:#222;transform-origin:0 50%;transform:scaleX(0.818)">250</div>
<div class="t" style="left:602.1px;top:107.4px;font-size:9px;color:#222;transform-origin:0 50%;transform:scaleX(0.818)">300</div>
<div class="t" style="left:653.4px;top:107.4px;font-size:9px;color:#222;transform-origin:0 50%;transform:scaleX(0.818)">350</div>
<div class="t" style="left:704.6px;top:107.4px;font-size:9px;color:#222;transform-origin:0 50%;transform:scaleX(0.818)">400</div>
<div class="t" style="left:755.8px;top:107.4px;font-size:9px;color:#222;transform-origin:0 50%;transform:scaleX(0.818)">450</div>
<div class="t" style="left:806.9px;top:107.4px;font-size:9px;color:#222;transform-origin:0 50%;transform:scaleX(0.818)">500</div>
<div class="t" style="left:828px;top:108.5px;font-size:8px;color:#222;transform-origin:0 50%;transform:scaleX(0.919)">毫米</div>
<svg class="a" style="left:34px;top:109.5px;" width="12" height="12" viewBox="0 0 12 12"><path d="M1 4.500H11M4.500 1V11" stroke="#333" stroke-dasharray="1.500 1.200"/><path d="M2 2L8 8M8 5V8H5" stroke="#222" fill="none" stroke-width="1.100"/></svg>
<div class="a" style="left:30px;top:123px;width:17px;height:424px;background:#f1eee0"></div>
<div class="a" style="left:30px;top:123px;width:1px;height:424px;background:#fbfaf4"></div>
<svg class="a" style="left:30px;top:123px;" width="17" height="424" viewBox="0 0 17 424"><rect x="15" y="5.0" width="1.500" height="1.300" fill="#444"/><rect x="15" y="10.2" width="1.500" height="1.300" fill="#444"/><rect x="15" y="15.3" width="1.500" height="1.300" fill="#444"/><rect x="13.500" y="20.4" width="3" height="1.200" fill="#333"/><rect x="15" y="25.5" width="1.500" height="1.300" fill="#444"/><rect x="15" y="30.6" width="1.500" height="1.300" fill="#444"/><rect x="15" y="35.8" width="1.500" height="1.300" fill="#444"/><rect x="15" y="40.9" width="1.500" height="1.300" fill="#444"/><path d="M11.500 46.6H16.500" stroke="#222" stroke-width="1.300"/><rect x="15" y="51.1" width="1.500" height="1.300" fill="#444"/><rect x="15" y="56.2" width="1.500" height="1.300" fill="#444"/><rect x="15" y="61.4" width="1.500" height="1.300" fill="#444"/><rect x="15" y="66.5" width="1.500" height="1.300" fill="#444"/><rect x="13.500" y="71.6" width="3" height="1.200" fill="#333"/><rect x="15" y="76.7" width="1.500" height="1.300" fill="#444"/><rect x="15" y="81.8" width="1.500" height="1.300" fill="#444"/><rect x="15" y="87.0" width="1.500" height="1.300" fill="#444"/><rect x="15" y="92.1" width="1.500" height="1.300" fill="#444"/><path d="M11.500 97.8H16.500" stroke="#222" stroke-width="1.300"/><rect x="15" y="102.3" width="1.500" height="1.300" fill="#444"/><rect x="15" y="107.4" width="1.500" height="1.300" fill="#444"/><rect x="15" y="112.6" width="1.500" height="1.300" fill="#444"/><rect x="15" y="117.7" width="1.500" height="1.300" fill="#444"/><rect x="13.500" y="122.8" width="3" height="1.200" fill="#333"/><rect x="15" y="127.9" width="1.500" height="1.300" fill="#444"/><rect x="15" y="133.0" width="1.500" height="1.300" fill="#444"/><rect x="15" y="138.2" width="1.500" height="1.300" fill="#444"/><rect x="15" y="143.3" width="1.500" height="1.300" fill="#444"/><path d="M11.500 149.0H16.500" stroke="#222" stroke-width="1.300"/><rect x="15" y="153.5" width="1.500" height="1.300" fill="#444"/><rect x="15" y="158.6" width="1.500" height="1.300" fill="#444"/><rect x="15" y="163.8" width="1.500" height="1.300" fill="#444"/><rect x="15" y="168.9" width="1.500" height="1.300" fill="#444"/><rect x="13.500" y="174.0" width="3" height="1.200" fill="#333"/><rect x="15" y="179.1" width="1.500" height="1.300" fill="#444"/><rect x="15" y="184.2" width="1.500" height="1.300" fill="#444"/><rect x="15" y="189.4" width="1.500" height="1.300" fill="#444"/><rect x="15" y="194.5" width="1.500" height="1.300" fill="#444"/><path d="M11.500 200.2H16.500" stroke="#222" stroke-width="1.300"/><rect x="15" y="204.7" width="1.500" height="1.300" fill="#444"/><rect x="15" y="209.8" width="1.500" height="1.300" fill="#444"/><rect x="15" y="215.0" width="1.500" height="1.300" fill="#444"/><rect x="15" y="220.1" width="1.500" height="1.300" fill="#444"/><rect x="13.500" y="225.2" width="3" height="1.200" fill="#333"/><rect x="15" y="230.3" width="1.500" height="1.300" fill="#444"/><rect x="15" y="235.4" width="1.500" height="1.300" fill="#444"/><rect x="15" y="240.6" width="1.500" height="1.300" fill="#444"/><rect x="15" y="245.7" width="1.500" height="1.300" fill="#444"/><path d="M11.500 251.4H16.500" stroke="#222" stroke-width="1.300"/><rect x="15" y="255.9" width="1.500" height="1.300" fill="#444"/><rect x="15" y="261.0" width="1.500" height="1.300" fill="#444"/><rect x="15" y="266.2" width="1.500" height="1.300" fill="#444"/><rect x="15" y="271.3" width="1.500" height="1.300" fill="#444"/><rect x="13.500" y="276.4" width="3" height="1.200" fill="#333"/><rect x="15" y="281.5" width="1.500" height="1.300" fill="#444"/><rect x="15" y="286.6" width="1.500" height="1.300" fill="#444"/><rect x="15" y="291.8" width="1.500" height="1.300" fill="#444"/><rect x="15" y="296.9" width="1.500" height="1.300" fill="#444"/><path d="M11.500 302.6H16.500" stroke="#222" stroke-width="1.300"/><rect x="15" y="307.1" width="1.500" height="1.300" fill="#444"/><rect x="15" y="312.2" width="1.500" height="1.300" fill="#444"/><rect x="15" y="317.4" width="1.500" height="1.300" fill="#444"/><rect x="15" y="322.5" width="1.500" height="1.300" fill="#444"/><rect x="13.500" y="327.6" width="3" height="1.200" fill="#333"/><rect x="15" y="332.7" width="1.500" height="1.300" fill="#444"/><rect x="15" y="337.8" width="1.500" height="1.300" fill="#444"/><rect x="15" y="343.0" width="1.500" height="1.300" fill="#444"/><rect x="15" y="348.1" width="1.500" height="1.300" fill="#444"/><path d="M11.500 353.8H16.500" stroke="#222" stroke-width="1.300"/><rect x="15" y="358.3" width="1.500" height="1.300" fill="#444"/><rect x="15" y="363.4" width="1.500" height="1.300" fill="#444"/><rect x="15" y="368.6" width="1.500" height="1.300" fill="#444"/><rect x="15" y="373.7" width="1.500" height="1.300" fill="#444"/><rect x="13.500" y="378.8" width="3" height="1.200" fill="#333"/><rect x="15" y="383.9" width="1.500" height="1.300" fill="#444"/><rect x="15" y="389.0" width="1.500" height="1.300" fill="#444"/><rect x="15" y="394.2" width="1.500" height="1.300" fill="#444"/><rect x="15" y="399.3" width="1.500" height="1.300" fill="#444"/><path d="M11.500 405.0H16.500" stroke="#222" stroke-width="1.300"/><path d="M3.500 243.500H15" stroke="#222" stroke-width="1.100" stroke-dasharray="2 1.500"/></svg>
<div class="t" style="left:23.299999999999997px;top:165.1px;width:30px;height:9px;text-align:center;font-size:8.500px;color:#222;letter-spacing:-0.600px;transform:rotate(-90deg)">200</div>
<div class="t" style="left:23.299999999999997px;top:216.3px;width:30px;height:9px;text-align:center;font-size:8.500px;color:#222;letter-spacing:-0.600px;transform:rotate(-90deg)">150</div>
<div class="t" style="left:23.299999999999997px;top:267.5px;width:30px;height:9px;text-align:center;font-size:8.500px;color:#222;letter-spacing:-0.600px;transform:rotate(-90deg)">100</div>
<div class="t" style="left:23.299999999999997px;top:318.7px;width:30px;height:9px;text-align:center;font-size:8.500px;color:#222;letter-spacing:-0.600px;transform:rotate(-90deg)">50</div>
<div class="t" style="left:23.299999999999997px;top:369.9px;width:30px;height:9px;text-align:center;font-size:8.500px;color:#222;letter-spacing:-0.600px;transform:rotate(-90deg)">0</div>
<div class="t" style="left:23.299999999999997px;top:421.1px;width:30px;height:9px;text-align:center;font-size:8.500px;color:#222;letter-spacing:-0.600px;transform:rotate(-90deg)">50</div>
<div class="t" style="left:23.299999999999997px;top:472.3px;width:30px;height:9px;text-align:center;font-size:8.500px;color:#222;letter-spacing:-0.600px;transform:rotate(-90deg)">100</div>
<div class="t" style="left:23.299999999999997px;top:532.0px;width:30px;height:9px;text-align:center;font-size:7.500px;color:#222;letter-spacing:0;transform:rotate(-90deg)">毫米</div>
<div class="a" style="left:3px;top:104px;width:27px;height:461px;background:#efecdc"></div>
<div class="a" style="left:29px;top:104px;width:1px;height:443px;background:#f9f8f1"></div>
<div class="a" style="left:5.800px;top:111px;width:21px;height:20.600px;border:1.500px solid #5a6a78;border-radius:4px;background:#e4e8e8"></div>
<svg class="a" style="left:12.8px;top:115.6px;" width="8" height="13" viewBox="0 0 8 13"><path d="M0.600 0.600V10.500L3 8.300L4.800 12.300L6.500 11.500L4.800 7.700H7.500Z" fill="#f4f8fc" stroke="#5a6c8c" stroke-width="1"/></svg>
<svg class="a" style="left:21.2px;top:125.5px;" width="4.5" height="4.5" viewBox="0 0 4.5 4.5"><path d="M4.500 0V4.500H0Z" fill="#111"/></svg>
<svg class="a" style="left:10.0px;top:137.0px;" width="12" height="14" viewBox="0 0 12 14"><path d="M3 0.500C1 4 1 8 3.500 13" fill="none" stroke="#666" stroke-width="1"/><circle cx="2.500" cy="5" r="1.600" fill="#fff" stroke="#444" stroke-width="0.800"/><path d="M5 6.500L11.500 9.500L8.500 10.500L7.500 13.500Z" fill="#111"/></svg>
<svg class="a" style="left:21.2px;top:148.2px;" width="4.5" height="4.5" viewBox="0 0 4.5 4.5"><path d="M4.500 0V4.500H0Z" fill="#111"/></svg>
<svg class="a" style="left:10.5px;top:160.5px;" width="12" height="13" viewBox="0 0 12 13"><path d="M3 0V9.500H12M0 3H9.500V12.500" fill="none" stroke="#333" stroke-width="1.600"/><path d="M11 1L3.500 9" stroke="#555" stroke-width="1.300"/></svg>
<svg class="a" style="left:21.2px;top:171.2px;" width="4.5" height="4.5" viewBox="0 0 4.5 4.5"><path d="M4.500 0V4.500H0Z" fill="#111"/></svg>
<svg class="a" style="left:9.5px;top:183.0px;" width="14" height="14" viewBox="0 0 14 14"><circle cx="5.500" cy="5.500" r="4.600" fill="#f4f6f8" stroke="#777" stroke-width="1.200"/><path d="M3 6.500H8" stroke="#bbb" stroke-width="1.500"/><path d="M9 9L12 12" stroke="#222" stroke-width="2"/><path d="M13.500 9.500V13.500H9.500Z" fill="#111"/></svg>
<svg class="a" style="left:9.0px;top:211.0px;" width="14" height="9" viewBox="0 0 14 9"><path d="M2 7L6 1.500L12 7Z" fill="none" stroke="#555" stroke-width="1"/><circle cx="6" cy="1.800" r="1.500" fill="#fff" stroke="#444" stroke-width="0.800"/><circle cx="2" cy="7" r="1.500" fill="#fff" stroke="#444" stroke-width="0.800"/><path d="M9 5L14 7L9 9Z" fill="#111"/></svg>
<svg class="a" style="left:21.2px;top:218.7px;" width="4.5" height="4.5" viewBox="0 0 4.5 4.5"><path d="M4.500 0V4.500H0Z" fill="#111"/></svg>
<svg class="a" style="left:8.5px;top:227.5px;" width="14" height="15" viewBox="0 0 14 15"><path d="M1 2L3 0.500L8 6L6 8Z" fill="#8a5a2a" stroke="#444" stroke-width="0.700"/><path d="M6 7.500L10 6L12.500 10C12.500 13 9 14.500 6.500 13C5 12 5 9.500 6 7.500Z" fill="#e2b8b0" stroke="#806060" stroke-width="0.700"/><circle cx="9" cy="10.500" r="1.800" fill="#c84a3a"/></svg>
<svg class="a" style="left:21.2px;top:239.2px;" width="4.5" height="4.5" viewBox="0 0 4.5 4.5"><path d="M4.500 0V4.500H0Z" fill="#111"/></svg>
<svg class="a" style="left:9.5px;top:251.8px;" width="12" height="12" viewBox="0 0 12 12"><rect x="1" y="1" width="10" height="10" fill="#fbfbf8" stroke="#555" stroke-width="1.200"/></svg>
<svg class="a" style="left:21.2px;top:262.0px;" width="4.5" height="4.5" viewBox="0 0 4.5 4.5"><path d="M4.500 0V4.500H0Z" fill="#111"/></svg>
<svg class="a" style="left:9.5px;top:274.5px;" width="12" height="12" viewBox="0 0 12 12"><circle cx="6" cy="6" r="5" fill="#fbfbf8" stroke="#555" stroke-width="1.200"/></svg>
<svg class="a" style="left:21.2px;top:284.7px;" width="4.5" height="4.5" viewBox="0 0 4.5 4.5"><path d="M4.500 0V4.500H0Z" fill="#111"/></svg>
<svg class="a" style="left:9.0px;top:297.0px;" width="13" height="12" viewBox="0 0 13 12"><path d="M3.500 1H9.500L12.300 6L9.500 11H3.500L0.700 6Z" fill="#fbfbf8" stroke="#555" stroke-width="1.200"/></svg>
<svg class="a" style="left:21.2px;top:307.2px;" width="4.5" height="4.5" viewBox="0 0 4.5 4.5"><path d="M4.500 0V4.500H0Z" fill="#111"/></svg>
<svg class="a" style="left:9.0px;top:318.3px;" width="13" height="13" viewBox="0 0 13 13"><circle cx="5.500" cy="4.500" r="3.600" fill="#fbfbf8" stroke="#555"/><rect x="5" y="5.500" width="7" height="6.500" fill="#fbfbf8" stroke="#555"/><path d="M0.800 8L5 12.500H0.800Z" fill="#fbfbf8" stroke="#555"/></svg>
<svg class="a" style="left:21.2px;top:329.0px;" width="4.5" height="4.5" viewBox="0 0 4.5 4.5"><path d="M4.500 0V4.500H0Z" fill="#111"/></svg>
<div class="t" style="left:10.3px;top:340.8px;font-size:12.5px;color:#333;font-weight:500;transform-origin:0 50%;transform:scaleX(0.991)">字</div>
<svg class="a" style="left:9.0px;top:365.7px;" width="13" height="11" viewBox="0 0 13 11"><rect x="0.500" y="0.500" width="12" height="10" fill="#fff" stroke="#666"/><rect x="0.500" y="0.500" width="12" height="2.800" fill="#8a93b8" stroke="#666"/><path d="M0.500 5.700H12.500M0.500 8.200H12.500M4.500 0.500V10.500M8.500 0.500V10.500" stroke="#888" stroke-width="0.800"/></svg>
<svg class="a" style="left:9.0px;top:385.8px;" width="13" height="13" viewBox="0 0 13 13"><path d="M2 11L11 2" stroke="#333" stroke-width="1.200"/><path d="M0.500 9L4 12.500M9 0.500L12.500 4" stroke="#333" stroke-width="1.400"/></svg>
<svg class="a" style="left:21.2px;top:396.5px;" width="4.5" height="4.5" viewBox="0 0 4.5 4.5"><path d="M4.500 0V4.500H0Z" fill="#111"/></svg>
<svg class="a" style="left:9.0px;top:408.0px;" width="13" height="14" viewBox="0 0 13 14"><path d="M3 3L10 11" stroke="#444" stroke-width="1.200"/><rect x="1" y="1" width="3.600" height="3.600" fill="#d9742a" stroke="#7a3a10" stroke-width="0.700"/><rect x="8" y="9" width="3.600" height="3.600" fill="#d9742a" stroke="#7a3a10" stroke-width="0.700"/></svg>
<svg class="a" style="left:21.2px;top:419.2px;" width="4.5" height="4.5" viewBox="0 0 4.5 4.5"><path d="M4.500 0V4.500H0Z" fill="#111"/></svg>
<svg class="a" style="left:9.5px;top:431.5px;" width="12" height="14" viewBox="0 0 12 14"><path d="M1 1H11C11 5.500 8.500 7.500 6 7.500C3.500 7.500 1 5.500 1 1Z" fill="#fdfdfb" stroke="#555"/><path d="M6 7.500V12M3 12.500H9" stroke="#555" stroke-width="1.200"/></svg>
<svg class="a" style="left:21.2px;top:442.7px;" width="4.5" height="4.5" viewBox="0 0 4.5 4.5"><path d="M4.500 0V4.500H0Z" fill="#111"/></svg>
<svg class="a" style="left:8.5px;top:453.8px;" width="14" height="14" viewBox="0 0 14 14"><path d="M8 3L11 6L5 12L2.500 12L2.500 9.500Z" fill="#666"/><path d="M9 1L13 5L11.500 6.500L7.500 2.500Z" fill="#222"/><rect x="0" y="8" width="5.500" height="5.500" fill="#e07820"/></svg>
<svg class="a" style="left:21.2px;top:465.0px;" width="4.5" height="4.5" viewBox="0 0 4.5 4.5"><path d="M4.500 0V4.500H0Z" fill="#111"/></svg>
<svg class="a" style="left:11.0px;top:476.0px;" width="9" height="14" viewBox="0 0 9 14"><path d="M4.500 0.500C7 3.500 8 6.500 6.800 9H2.200C1 6.500 2 3.500 4.500 0.500Z" fill="#fff" stroke="#555"/><path d="M4.500 3.500V7" stroke="#555"/><path d="M1.500 10.500H7.500M1 13H8" stroke="#444" stroke-width="1.200"/></svg>
<svg class="a" style="left:21.2px;top:487.7px;" width="4.5" height="4.5" viewBox="0 0 4.5 4.5"><path d="M4.500 0V4.500H0Z" fill="#111"/></svg>
<svg class="a" style="left:8.0px;top:498.5px;" width="15" height="14" viewBox="0 0 15 14"><path d="M1.500 6.500L7 1L12.500 6.500L7 12Z" fill="#fbfbf8" stroke="#555"/><path d="M3 7.500H11L7 11.500Z" fill="#c86a24"/><path d="M13 7C14 9 14.500 10 13.500 11C12.500 11 12 9 13 7Z" fill="#555"/><path d="M4 3.500L2.500 1" stroke="#3a58a8" stroke-width="1.200"/></svg>
<svg class="a" style="left:21.2px;top:510.2px;" width="4.5" height="4.5" viewBox="0 0 4.5 4.5"><path d="M4.500 0V4.500H0Z" fill="#111"/></svg>
<svg class="a" style="left:9.0px;top:521.0px;" width="13" height="13" viewBox="0 0 13 13"><path d="M1.500 4L4.500 1L8.500 5L5.500 8Z" fill="#d4d4d4" stroke="#777" stroke-width="0.800"/><path d="M4.500 7.500L8 11L11 8.500L7.500 5Z" fill="#ecc868"/></svg>
<svg class="a" style="left:21.2px;top:532.2px;" width="4.5" height="4.5" viewBox="0 0 4.5 4.5"><path d="M4.500 0V4.500H0Z" fill="#111"/></svg>
<div class="a" style="left:832.3px;top:122.7px;width:13.2px;height:409px;background:#f0f3fc"></div>
<div class="a" style="left:832.3px;top:123.5px;width:12.9px;height:14px;background:#c9d7f9;border-radius:2px"></div>
<svg class="a" style="left:834.8px;top:126.5px;" width="8" height="8" viewBox="0 0 8 8"><path d="M1 5L4 2L7 5" fill="none" stroke="#3a4f98" stroke-width="1.700"/></svg>
<div class="a" style="left:832.3px;top:139px;width:12.9px;height:375px;background:linear-gradient(90deg,#d3defa,#c3d2f8);border-radius:2px"></div>
<svg class="a" style="left:835.3px;top:322px;" width="7" height="9" viewBox="0 0 7 9"><path d="M0 1H7M0 3H7M0 5H7M0 7H7" stroke="#a9bcf0" stroke-width="1"/></svg>
<div class="a" style="left:832.3px;top:517.5px;width:12.9px;height:13.5px;background:#c9d7f9;border-radius:2px"></div>
<svg class="a" style="left:834.8px;top:520.5px;" width="8" height="8" viewBox="0 0 8 8"><path d="M1 2L4 5L7 2" fill="none" stroke="#3a4f98" stroke-width="1.700"/></svg>
<div class="a" style="left:46.5px;top:532px;width:799.5px;height:15px;background:#f1eee0"></div>
<div class="a" style="left:46.5px;top:532px;width:799.5px;height:1px;background:#fbfaf4"></div>
<svg class="a" style="left:50px;top:533.5px;" width="9" height="11" viewBox="0 0 9 11"><path d="M0.600 0.600H5.500L8.400 3.500V10.400H0.600Z" fill="#fff" stroke="#222" stroke-width="1.200"/><path d="M4.500 4V9M2 6.500H7" stroke="#222" stroke-width="1.300"/></svg>
<svg class="a" style="left:66px;top:535px;" width="7" height="8" viewBox="0 0 7 8"><path d="M1 0V8" stroke="#a8a69a" stroke-width="1.500"/><path d="M7 0V8L2.500 4Z" fill="#a8a69a"/></svg>
<svg class="a" style="left:82px;top:535px;" width="5" height="8" viewBox="0 0 5 8"><path d="M5 0V8L0.500 4Z" fill="#a8a69a"/></svg>
<div class="t" style="left:110px;top:534.5px;font-size:10.5px;color:#222;transform-origin:0 50%;transform:scaleX(1.125)">1 / 1</div>
<svg class="a" style="left:157px;top:535px;" width="5" height="8" viewBox="0 0 5 8"><path d="M0 0V8L4.500 4Z" fill="#a8a69a"/></svg>
<svg class="a" style="left:170px;top:535px;" width="7" height="8" viewBox="0 0 7 8"><path d="M6 0V8" stroke="#a8a69a" stroke-width="1.500"/><path d="M0 0V8L4.500 4Z" fill="#a8a69a"/></svg>
<svg class="a" style="left:185px;top:533.5px;" width="9" height="11" viewBox="0 0 9 11"><path d="M0.600 0.600H5.500L8.400 3.500V10.400H0.600Z" fill="#fff" stroke="#222" stroke-width="1.200"/><path d="M4.500 4V9M2 6.500H7" stroke="#222" stroke-width="1.300"/></svg>
<svg class="a" style="left:196px;top:532px;" width="52" height="15" viewBox="0 0 52 15"><path d="M1 0H41L49 14.500H1Z" fill="#fff" stroke="#c9c6b6" stroke-width="1"/><path d="M0 0H44" stroke="#fff" stroke-width="2"/></svg>
<div class="t" style="left:210.5px;top:534.3px;font-size:10.5px;color:#222;transform-origin:0 50%;transform:scaleX(1.012)">页 1</div>
<svg class="a" style="left:441px;top:534px;" width="4" height="10" viewBox="0 0 4 10"><path d="M1 1V2M1 3.500V4.500M1 6V7M1 8.500V9.500M3 1V2M3 3.500V4.500M3 6V7M3 8.500V9.500" stroke="#aaa79a"/></svg>
<div class="a" style="left:450px;top:533.5px;width:379.2px;height:12px;background:#f0f3fc"></div>
<div class="a" style="left:450px;top:533.5px;width:12px;height:12px;background:#c9d7f9;border-radius:2px"></div>
<svg class="a" style="left:452px;top:535.5px;" width="8" height="8" viewBox="0 0 8 8"><path d="M5 1L2 4L5 7" fill="none" stroke="#3a4f98" stroke-width="1.700"/></svg>
<div class="a" style="left:463.5px;top:533.5px;width:350.5px;height:12px;background:linear-gradient(#d3defa,#c1d0f7);border-radius:2px"></div>
<svg class="a" style="left:635px;top:536px;" width="9" height="7" viewBox="0 0 9 7"><path d="M1 0V7M3 0V7M5 0V7M7 0V7" stroke="#a9bcf0" stroke-width="1"/></svg>
<div class="a" style="left:817px;top:533.5px;width:12.2px;height:12px;background:#c9d7f9;border-radius:2px"></div>
<svg class="a" style="left:819.2px;top:535.5px;" width="8" height="8" viewBox="0 0 8 8"><path d="M2 1L5 4L2 7" fill="none" stroke="#3a4f98" stroke-width="1.700"/></svg>
<svg class="a" style="left:832px;top:533px;" width="12" height="12" viewBox="0 0 12 12"><circle cx="5" cy="5" r="3.800" fill="#f4f6f8" stroke="#555" stroke-width="1.100"/><path d="M3 5H7M5 3V7" stroke="#555"/><path d="M8 8L11 11" stroke="#333" stroke-width="1.700"/></svg>
<div class="a" style="left:846.2px;top:104px;width:18.3px;height:461px;background:#f2f0e5"></div>
<svg class="a" style="left:851px;top:108px;" width="11" height="3" viewBox="0 0 11 3"><rect x="0" y="1" width="1.500" height="1.500" fill="#aaa79a"/><rect x="3" y="1" width="1.500" height="1.500" fill="#aaa79a"/><rect x="6" y="1" width="1.500" height="1.500" fill="#aaa79a"/><rect x="9" y="1" width="1.500" height="1.500" fill="#aaa79a"/></svg>
<svg class="a" style="left:849.5px;top:113.7px;" width="13" height="13" viewBox="0 0 13 13"><circle cx="6.500" cy="6.500" r="5.500" fill="#fdfdfb" stroke="#c9c6b8"/><path d="M5 4V9L9 6.500Z" fill="#111"/></svg>
<svg class="a" style="left:852px;top:131px;" width="10" height="10" viewBox="0 0 10 10"><path d="M2 8L8 2M6 1L9 4" stroke="#cfccbe" stroke-width="2"/></svg>
<svg class="a" style="left:853px;top:145px;" width="8" height="8" viewBox="0 0 8 8"><path d="M1 5L4 2L7 5" fill="none" stroke="#cfd0d8" stroke-width="1.700"/></svg>
<svg class="a" style="left:849px;top:157px;" width="15" height="15" viewBox="0 0 15 15"><rect x="0.600" y="0.600" width="13.800" height="13.400" fill="#fff" stroke="#222" stroke-width="1.200"/><path d="M1 1L14 14M14 1L1 14" stroke="#222" stroke-width="1"/></svg>
<div class="a" style="left:849.2px;top:171.7px;width:14.1px;height:15.1px;background:#231f1e"></div>
<div class="a" style="left:849.2px;top:186.5px;width:14.1px;height:15.1px;background:#403d3c"></div>
<div class="a" style="left:849.2px;top:201.3px;width:14.1px;height:15.1px;background:#575554"></div>
<div class="a" style="left:849.2px;top:216.0px;width:14.1px;height:15.1px;background:#6e6c6b"></div>
<div class="a" style="left:849.2px;top:230.8px;width:14.1px;height:15.1px;background:#858483"></div>
<div class="a" style="left:849.2px;top:245.6px;width:14.1px;height:15.1px;background:#9a9998"></div>
<div class="a" style="left:849.2px;top:260.4px;width:14.1px;height:15.1px;background:#adacac"></div>
<div class="a" style="left:849.2px;top:275.2px;width:14.1px;height:15.1px;background:#c3c2c2"></div>
<div class="a" style="left:849.2px;top:289.9px;width:14.1px;height:15.1px;background:#dedddd"></div>
<div class="a" style="left:849.2px;top:304.7px;width:14.1px;height:15.1px;background:#eeeded"></div>
<div class="a" style="left:849.2px;top:320.1px;width:14.1px;height:13.8px;background:#fff;border:1.500px solid #333"></div>
<div class="a" style="left:849.2px;top:334.3px;width:14.1px;height:15.1px;background:#1d2088"></div>
<div class="a" style="left:849.2px;top:349.1px;width:14.1px;height:15.1px;background:#1a9be0"></div>
<div class="a" style="left:849.2px;top:363.8px;width:14.1px;height:15.1px;background:#0a9a48"></div>
<div class="a" style="left:849.2px;top:378.6px;width:14.1px;height:15.1px;background:#f6ef00"></div>
<div class="a" style="left:849.2px;top:393.4px;width:14.1px;height:15.1px;background:#e60012"></div>
<div class="a" style="left:849.2px;top:408.2px;width:14.1px;height:15.1px;background:#e5007f"></div>
<div class="a" style="left:849.2px;top:423.0px;width:14.1px;height:15.1px;background:#b93a8c"></div>
<div class="a" style="left:849.2px;top:437.7px;width:14.1px;height:15.1px;background:#f08200"></div>
<div class="a" style="left:849.2px;top:452.5px;width:14.1px;height:15.1px;background:#f4aeb4"></div>
<div class="a" style="left:849.2px;top:467.3px;width:14.1px;height:15.1px;background:#8c7c70"></div>
<div class="a" style="left:849.2px;top:482.1px;width:14.1px;height:15.1px;background:#d2d0ea"></div>
<div class="a" style="left:849.2px;top:496.9px;width:14.1px;height:15.1px;background:#aaa3d6"></div>
<div class="a" style="left:849.2px;top:511.6px;width:14.1px;height:15.1px;background:#7b94d2"></div>
<div class="a" style="left:849.7px;top:529.5px;width:12.2px;height:10.5px;background:#c9d7f9;border-radius:2px"></div>
<svg class="a" style="left:851.8px;top:531px;" width="8" height="8" viewBox="0 0 8 8"><path d="M1 2L4 5L7 2" fill="none" stroke="#3a4f98" stroke-width="1.700"/></svg>
<svg class="a" style="left:851.5px;top:544.5px;" width="8" height="9" viewBox="0 0 8 9"><path d="M1.200 0V9" stroke="#111" stroke-width="1.800"/><path d="M7.800 0.300V8.700L2.800 4.500Z" fill="#111"/></svg>
<div class="a" style="left:30px;top:547.5px;width:805.5px;height:17px;background:#fff"></div>
<div class="a" style="left:30px;top:546.5px;width:816px;height:1px;background:#e4e1d2"></div>
<div class="a" style="left:30px;top:547px;width:52px;height:18px;background:#efecdc"></div>
<svg class="a" style="left:33px;top:550px;" width="3" height="12" viewBox="0 0 3 12"><rect x="0.500" y="0" width="1.500" height="1.500" fill="#aaa79a"/><rect x="0.500" y="3.500" width="1.500" height="1.500" fill="#aaa79a"/><rect x="0.500" y="7" width="1.500" height="1.500" fill="#aaa79a"/><rect x="0.500" y="10.500" width="1.500" height="1.500" fill="#aaa79a"/></svg>
<svg class="a" style="left:38px;top:550px;" width="13" height="13" viewBox="0 0 13 13"><circle cx="6.500" cy="6.500" r="5.500" fill="#fdfdfb" stroke="#c9c6b8"/><path d="M5 4V9L9 6.500Z" fill="#111"/></svg>
<svg class="a" style="left:50px;top:546.5px;" width="19" height="19" viewBox="0 0 19 19"><path d="M9.200 7.800L11.200 9.800L4.600 15.200L3.800 14.600Z" fill="#8e8e8e" stroke="#5a5a5a" stroke-width="0.500"/><path d="M10.600 7.400L13.600 5" stroke="#1e2226" stroke-width="2.600" stroke-linecap="round"/><path d="M8.500 6.300L11.900 9.700" stroke="#1e2226" stroke-width="2.300" stroke-linecap="round"/></svg>
<svg class="a" style="left:67px;top:549px;" width="15" height="15" viewBox="0 0 15 15"><rect x="0" y="0" width="15" height="15" fill="#e1e3e6"/><rect x="1.600" y="1.600" width="11.800" height="11.800" fill="#fff" stroke="#222" stroke-width="1.200"/><path d="M2 2L13 13M13 2L2 13" stroke="#222" stroke-width="1"/></svg>
<div class="t" style="left:307.2px;top:552.2px;font-size:10px;color:#adadad;transform-origin:0 50%;transform:scaleX(1.047)"><span style="display:inline-block;transform:skewX(-14deg)">将颜色(或对象)拖动至此处,&nbsp; 以便将这些颜色与文档存储在一起</span></div>
<div class="a" style="left:3px;top:564.5px;width:861px;height:1px;background:#d9d6c6"></div>
<div class="a" style="left:3px;top:565.5px;width:861px;height:1px;background:#f7f5ec"></div>
<div class="t" style="left:8.4px;top:571.0px;font-size:10px;color:#222;transform-origin:0 50%;transform:scaleX(1.003)">( 67.365, 7.516 )</div>
<svg class="a" style="left:106px;top:570px;" width="6" height="10" viewBox="0 0 6 10"><path d="M0.500 0.500V9.500L5.500 5Z" fill="#111"/></svg>
<div class="t" style="left:304.4px;top:570.3px;font-size:10.5px;color:#111;transform-origin:0 50%;transform:scaleX(0.967)">矩形 于 图层 1</div>
<svg class="a" style="left:574.3px;top:570.3px;" width="12" height="12" viewBox="0 0 12 12"><rect x="0.500" y="0.500" width="11" height="8.500" rx="1" fill="#b9bdd2" stroke="#8a8eac"/><rect x="2.500" y="2.200" width="7" height="5" fill="#dfe1ee" stroke="#8a8eac" stroke-width="0.800"/><circle cx="6" cy="4.700" r="1.400" fill="#9094b4"/><path d="M3 10.800H9" stroke="#9a9eba" stroke-width="1.200"/></svg>
<div class="a" style="left:634.5px;top:569px;width:1px;height:13px;background:#d4d1c2"></div>
<svg class="a" style="left:637px;top:568.5px;" width="16" height="16" viewBox="0 0 16 16"><path d="M2 8L8 2L14 8L8 14Z" fill="#fbfbf8" stroke="#444"/><path d="M3.500 9H12.500L8 13.500Z" fill="#c86a24"/><path d="M14 9C15 11 15.500 12 14.500 13C13.500 13 13 11 14 9Z" fill="#555"/></svg>
<svg class="a" style="left:656.5px;top:568.4px;" width="15" height="15" viewBox="0 0 15 15"><rect x="0.500" y="0.500" width="14" height="14" fill="#fff" stroke="#333" stroke-width="1"/><path d="M1 1L14 14M14 1L1 14" stroke="#222" stroke-width="1"/></svg>
<div class="t" style="left:675px;top:570.7px;font-size:11px;color:#111;transform-origin:0 50%;transform:scaleX(1.000)">无</div>
<svg class="a" style="left:641px;top:587px;" width="9" height="14" viewBox="0 0 9 14"><path d="M4.500 0.500C7 3.500 8 6.500 6.800 9H2.200C1 6.500 2 3.500 4.500 0.500Z" fill="#fff" stroke="#555"/><path d="M4.500 3.500V7" stroke="#555"/><path d="M1.500 10.500H7.500M0.500 12.800H8.500" stroke="#333" stroke-width="1.200"/></svg>
<div class="a" style="left:656.8px;top:587px;width:14.8px;height:14.3px;background:#231f1e"></div>
<div class="t" style="left:674.3px;top:589.7px;font-size:10px;color:#222;transform-origin:0 50%;transform:scaleX(0.934)">C: 0 M: 0 Y: 0 K: 100&nbsp; .200 mm</div>
<svg class="a" style="left:827.5px;top:572.3px;" width="15" height="15" viewBox="0 0 15 15"><rect x="0.500" y="0.500" width="12.500" height="12.500" rx="1.500" fill="#fbf9f6" stroke="#b9b4aa"/><ellipse cx="6.700" cy="5" rx="2.300" ry="2.900" fill="#b9522e"/><path d="M1.500 12.500C2.500 9.500 4 8.800 6.700 8.800C9.400 8.800 11 9.500 12 12.500Z" fill="#b9522e"/><path d="M15 10.500V15H10.500Z" fill="#111"/></svg>
<div class="t" style="left:8.4px;top:588.4px;font-size:10.5px;color:#111;transform-origin:0 50%;transform:scaleX(0.950)">文档颜色预置文件:</div>
<div class="t" style="left:96px;top:589.0px;font-size:10px;color:#222;transform-origin:0 50%;transform:scaleX(0.912)">RGB: sRGB IEC61966-2.1; CMYK: Japan Color 2001 Coated;</div>
<div class="t" style="left:351px;top:588.4px;font-size:10.5px;color:#111;transform-origin:0 50%;transform:scaleX(0.932)">灰度:</div>
<div class="t" style="left:377.8px;top:589.0px;font-size:10px;color:#222;transform-origin:0 50%;transform:scaleX(0.919)">Dot Gain 15%</div>
<svg class="a" style="left:441px;top:588px;" width="6" height="10" viewBox="0 0 6 10"><path d="M0.500 0.500V9.500L5.500 5Z" fill="#111"/></svg>
<svg class="a" style="left:852px;top:592px;" width="10" height="10" viewBox="0 0 10 10"><path d="M9 3V4M9 6V7M6 6V7M9 9V10M6 9V10M3 9V10" stroke="#b9b6a6" stroke-width="1.500"/></svg>
<div class="a" style="left:0px;top:26px;width:3px;height:582px;background:linear-gradient(90deg,#6a80d6,#7d93e0)"></div>
<div class="a" style="left:864.7px;top:26px;width:3.3px;height:582px;background:linear-gradient(90deg,#8496dc,#6a7cca 50%,#4a58ac)"></div>
<div class="a" style="left:3px;top:602.4px;width:861.7px;height:1.2px;background:#f8f7f0"></div>
<div class="a" style="left:0px;top:603.6px;width:868px;height:4.4px;background:linear-gradient(#5e6ec8 0%,#6c80de 35%,#7088e2 60%,#6278d4 100%)"></div>
<div class="a" style="left:239px;top:132px;width:389px;height:344px;background:linear-gradient(#7b92de 0%,#7486d6 35%,#5e5eb6 80%,#5656ae 100%);border-radius:7px 7px 0 0"></div>
<div class="a" style="left:239px;top:132px;width:389px;height:25px;border-radius:7px 7px 0 0;background:linear-gradient(#8aa3ea 0%,#7e98e2 20%,#7b96e0 70%,#829be3 100%)"></div>
<div class="a" style="left:242px;top:157px;width:383.5px;height:316.5px;background:#efecdc"></div>
<div class="a" style="left:242px;top:472.5px;width:383.5px;height:1px;background:#cfd4f0"></div>
<div class="a" style="left:624.5px;top:157px;width:1px;height:316px;background:#cfd4f0"></div>
<div class="t" style="left:244.3px;top:141.1px;font-size:11.5px;font-family:'Liberation Serif','Noto Serif CJK SC',serif;font-weight:900;color:#e6ecfb;transform-origin:0 50%;transform:scaleX(1.037)">渐变填充</div>
<div class="a" style="left:607px;top:137px;width:17px;height:17px;border:1px solid #e4e9f8;border-radius:3px;background:linear-gradient(135deg,#d0909c,#b9707e)"></div>
<svg class="a" style="left:610px;top:140px;" width="11" height="11" viewBox="0 0 11 11"><path d="M1.500 1.500L9.500 9.500M9.500 1.500L1.500 9.500" stroke="#fff" stroke-width="2"/></svg>
<div class="t" style="left:251.4px;top:169.5px;font-size:11.5px;color:#111;transform-origin:0 50%;transform:scaleX(0.954)">类别<span style="font-size:9.500px">(<u>T</u>)</span>:</div>
<div class="inp" style="left:305px;top:167px;width:78px;height:18px;border-color:#a3b1c9"></div>
<div class="t" style="left:308.4px;top:170.2px;font-size:11px;color:#111;transform-origin:0 50%;transform:scaleX(0.786)">辐射</div>
<div class="a" style="left:368px;top:169px;width:13px;height:14px;background:linear-gradient(#cfdcfb,#b6c8f5);border-radius:2px"></div>
<svg class="a" style="left:370.5px;top:173.5px;" width="8" height="6" viewBox="0 0 8 6"><path d="M1 1L4 4.300L7 1" fill="none" stroke="#2a3f86" stroke-width="2"/></svg>
<div class="a" style="left:388px;top:169px;width:153px;height:97px;border:1px solid #d9d6c6;border-radius:3px"></div>
<div class="a" style="left:393px;top:164px;width:26px;height:10px;background:#efecdc"></div>
<div class="t" style="left:396px;top:163.3px;font-size:11.5px;color:#2a55c0;transform-origin:0 50%;transform:scaleX(0.887)">选项</div>
<div class="inp" style="left:462px;top:182px;width:55px;height:20px;background:#efecdc;border-color:#c9c7ba"></div>
<div class="t" style="left:465px;top:185.0px;font-size:10px;color:#b8b5a6;transform-origin:0 50%;transform:scaleX(0.971)">.0</div>
<svg class="a" style="left:504px;top:185px;" width="8" height="6" viewBox="0 0 8 6"><path d="M1 4.500L4 1.500L7 4.500" fill="none" stroke="#cfccbe" stroke-width="1.800"/></svg>
<svg class="a" style="left:504px;top:193px;" width="8" height="6" viewBox="0 0 8 6"><path d="M1 1.500L4 4.500L7 1.500" fill="none" stroke="#cfccbe" stroke-width="1.800"/></svg>
<div class="inp" style="left:462px;top:207px;width:55px;height:20px;background:#efecdc;border-color:#c9c7ba"></div>
<div class="t" style="left:465px;top:210.0px;font-size:10px;color:#b8b5a6;transform-origin:0 50%;transform:scaleX(0.863)">256</div>
<svg class="a" style="left:504px;top:210px;" width="8" height="6" viewBox="0 0 8 6"><path d="M1 4.500L4 1.500L7 4.500" fill="none" stroke="#cfccbe" stroke-width="1.800"/></svg>
<svg class="a" style="left:504px;top:218px;" width="8" height="6" viewBox="0 0 8 6"><path d="M1 1.500L4 4.500L7 1.500" fill="none" stroke="#cfccbe" stroke-width="1.800"/></svg>
<div class="inp" style="left:462px;top:234px;width:55px;height:20px;background:#fff;border-color:#a3b1c9"></div>
<div class="t" style="left:465px;top:237.0px;font-size:10px;color:#111;transform-origin:0 50%;transform:scaleX(0.863)">0</div>
<div class="a" style="left:501px;top:236px;width:14px;height:16px;background:#c9d6f7;border-radius:2px"></div>
<svg class="a" style="left:504px;top:237px;" width="8" height="6" viewBox="0 0 8 6"><path d="M1 4.500L4 1.500L7 4.500" fill="none" stroke="#2f4fa0" stroke-width="1.800"/></svg>
<svg class="a" style="left:504px;top:245px;" width="8" height="6" viewBox="0 0 8 6"><path d="M1 1.500L4 4.500L7 1.500" fill="none" stroke="#2f4fa0" stroke-width="1.800"/></svg>
<div class="a" style="left:523px;top:210px;width:16px;height:15px;border:1px solid #2d3b5e;border-radius:3px;background:#e4e7ef"></div>
<svg class="a" style="left:526.5px;top:212px;" width="9" height="11" viewBox="0 0 9 11"><rect x="0.500" y="4.500" width="8" height="5.500" fill="#3b4663"/><path d="M2.300 4.500V3C2.300 0.800 6.700 0.800 6.700 3V4.500" fill="none" stroke="#3b4663" stroke-width="1.300"/></svg>
<div class="t" style="left:522px;top:241.2px;font-size:9px;color:#111;font-weight:bold;transform-origin:0 50%;transform:scaleX(0.936)">%</div>
<div class="a" style="left:548.5px;top:165.5px;width:70px;height:76.5px;background:#f7f5ec;border-right:1.800px solid #2b2b28;border-bottom:1.600px solid #2b2b28"></div>
<div class="a" style="left:550.5px;top:167.5px;width:65.5px;height:72px;background:radial-gradient(circle at 19% 38%,#fbfbfb 0%,#ededed 10%,#cdcdcd 25%,#a9a9a9 45%,#8c8c8c 65%,#6e6e6e 85%,#565656 105%,#444 125%);border:1.500px solid #2a2a28"></div>
<div class="a" style="left:300px;top:278px;width:316px;height:127px;border:1px solid #d9d6c6;border-radius:3px"></div>
<div class="a" style="left:480px;top:287px;width:104px;height:90px;background:#777"></div>
<div class="a" style="left:480.2px;top:287.5px;width:14.2px;height:14.2px;background:#231f1e"></div>
<div class="a" style="left:495.0px;top:287.5px;width:14.2px;height:14.2px;background:#403d3c"></div>
<div class="a" style="left:509.8px;top:287.5px;width:14.2px;height:14.2px;background:#575554"></div>
<div class="a" style="left:524.6px;top:287.5px;width:14.2px;height:14.2px;background:#6e6c6b"></div>
<div class="a" style="left:539.4px;top:287.5px;width:14.2px;height:14.2px;background:#858483"></div>
<div class="a" style="left:554.1px;top:287.5px;width:14.2px;height:14.2px;background:#9a9998"></div>
<div class="a" style="left:568.9px;top:287.5px;width:14.2px;height:14.2px;background:#adacac"></div>
<div class="a" style="left:480.2px;top:302.3px;width:14.2px;height:14.2px;background:#c3c2c2"></div>
<div class="a" style="left:495.0px;top:302.3px;width:14.2px;height:14.2px;background:#dedddd"></div>
<div class="a" style="left:509.8px;top:302.3px;width:14.2px;height:14.2px;background:#eeeded"></div>
<div class="a" style="left:524.6px;top:302.3px;width:14.2px;height:14.2px;background:#ffffff"></div>
<div class="a" style="left:539.4px;top:302.3px;width:14.2px;height:14.2px;background:#1d2088"></div>
<div class="a" style="left:554.1px;top:302.3px;width:14.2px;height:14.2px;background:#1a9be0"></div>
<div class="a" style="left:568.9px;top:302.3px;width:14.2px;height:14.2px;background:#0a9a48"></div>
<div class="a" style="left:480.2px;top:317.1px;width:14.2px;height:14.2px;background:#f6ef00"></div>
<div class="a" style="left:495.0px;top:317.1px;width:14.2px;height:14.2px;background:#e60012"></div>
<div class="a" style="left:509.8px;top:317.1px;width:14.2px;height:14.2px;background:#e5007f"></div>
<div class="a" style="left:524.6px;top:317.1px;width:14.2px;height:14.2px;background:#b93a8c"></div>
<div class="a" style="left:539.4px;top:317.1px;width:14.2px;height:14.2px;background:#f08200"></div>
<div class="a" style="left:554.1px;top:317.1px;width:14.2px;height:14.2px;background:#f4aeb4"></div>
<div class="a" style="left:568.9px;top:317.1px;width:14.2px;height:14.2px;background:#8c7c70"></div>
<div class="a" style="left:480.2px;top:331.9px;width:14.2px;height:14.2px;background:#d2d0ea"></div>
<div class="a" style="left:495.0px;top:331.9px;width:14.2px;height:14.2px;background:#a9a3d4"></div>
<div class="a" style="left:509.8px;top:331.9px;width:14.2px;height:14.2px;background:#6f90d2"></div>
<div class="a" style="left:524.6px;top:331.9px;width:14.2px;height:14.2px;background:#7c6fc2"></div>
<div class="a" style="left:539.4px;top:331.9px;width:14.2px;height:14.2px;background:#8d84c2"></div>
<div class="a" style="left:554.1px;top:331.9px;width:14.2px;height:14.2px;background:#4c64a2"></div>
<div class="a" style="left:568.9px;top:331.9px;width:14.2px;height:14.2px;background:#5a5282"></div>
<div class="a" style="left:480.2px;top:346.7px;width:14.2px;height:14.2px;background:#6c86aa"></div>
<div class="a" style="left:495.0px;top:346.7px;width:14.2px;height:14.2px;background:#1692e0"></div>
<div class="a" style="left:509.8px;top:346.7px;width:14.2px;height:14.2px;background:#a4daf8"></div>
<div class="a" style="left:524.6px;top:346.7px;width:14.2px;height:14.2px;background:#b4cee0"></div>
<div class="a" style="left:539.4px;top:346.7px;width:14.2px;height:14.2px;background:#92a9b8"></div>
<div class="a" style="left:554.1px;top:346.7px;width:14.2px;height:14.2px;background:#7a8a92"></div>
<div class="a" style="left:568.9px;top:346.7px;width:14.2px;height:14.2px;background:#525a62"></div>
<div class="a" style="left:480.2px;top:361.4px;width:14.2px;height:14.2px;background:#5c7a7a"></div>
<div class="a" style="left:495.0px;top:361.4px;width:14.2px;height:14.2px;background:#3c9288"></div>
<div class="a" style="left:509.8px;top:361.4px;width:14.2px;height:14.2px;background:#62a29a"></div>
<div class="a" style="left:524.6px;top:361.4px;width:14.2px;height:14.2px;background:#4aaa9a"></div>
<div class="a" style="left:539.4px;top:361.4px;width:14.2px;height:14.2px;background:#42aa7a"></div>
<div class="a" style="left:554.1px;top:361.4px;width:14.2px;height:14.2px;background:#52bac8"></div>
<div class="a" style="left:568.9px;top:361.4px;width:14.2px;height:14.2px;background:#4aaac2"></div>
<div class="a" style="left:586px;top:287.5px;width:12.5px;height:89px;background:#fdfdfb"></div>
<div class="a" style="left:586px;top:287.5px;width:12.5px;height:13.5px;background:#c9d7f9;border-radius:2px"></div>
<svg class="a" style="left:588.2px;top:290.5px;" width="8" height="8" viewBox="0 0 8 8"><path d="M1 5L4 2L7 5" fill="none" stroke="#3a4f98" stroke-width="1.700"/></svg>
<div class="a" style="left:586px;top:302px;width:12.5px;height:23px;background:linear-gradient(90deg,#d3defa,#c3d2f8);border-radius:2px"></div>
<svg class="a" style="left:589px;top:309px;" width="7" height="9" viewBox="0 0 7 9"><path d="M0 1H7M0 3H7M0 5H7M0 7H7" stroke="#a9bcf0" stroke-width="1"/></svg>
<div class="a" style="left:586px;top:363px;width:12.5px;height:13.5px;background:#c9d7f9;border-radius:2px"></div>
<svg class="a" style="left:588.2px;top:366px;" width="8" height="8" viewBox="0 0 8 8"><path d="M1 2L4 5L7 2" fill="none" stroke="#3a4f98" stroke-width="1.700"/></svg>
<div class="btn" style="left:510.5px;top:382.5px;width:63.5px;height:18px;line-height:15px;"></div>
<div class="t" style="left:524.5px;top:385.9px;font-size:11.5px;color:#111;transform-origin:0 50%;transform:scaleX(0.883)">其它<span style="font-size:10px">(<u>O</u>)</span></div>
<div class="a" style="left:457px;top:344px;width:5px;height:5.3px;background:#fff;border:1px solid #111"></div>
<div class="a" style="left:455.5px;top:312.5px;width:1.8px;height:16px;background:#131c86;border-radius:1px"></div>
<div class="btn" style="left:494.5px;top:416px;width:121.5px;height:17px;line-height:14px;border-color:#dcdacb;background:#f3f1e6"></div>
<div class="t" style="left:510.6px;top:419.7px;font-size:11px;color:#bdbaab;transform-origin:0 50%;transform:scaleX(0.950)"><span style="font-size:10px">PostScript</span> 选项<span style="font-size:10px">(<u>P</u>)...</span></div>
<div class="btn" style="left:440px;top:419px;width:27px;height:14px;line-height:11px;"></div>
<div class="a" style="left:445px;top:425px;width:14px;height:2.5px;background:#333"></div>
<div class="btn" style="left:414px;top:445px;width:63.5px;height:17.5px;line-height:14.5px;"></div>
<div class="btn" style="left:483.5px;top:445px;width:63px;height:17.5px;line-height:14.5px;"></div>
<div class="t" style="left:504.2px;top:448.4px;font-size:11.5px;color:#111;transform-origin:0 50%;transform:scaleX(0.883)">取消</div>
<div class="btn" style="left:554px;top:445px;width:63px;height:17.5px;line-height:14.5px;"></div>
<div class="t" style="left:568.3px;top:448.4px;font-size:11.5px;color:#111;transform-origin:0 50%;transform:scaleX(0.899)">帮助<span style="font-size:10px">(<u>H</u>)</span></div>
<div class="a" style="left:66px;top:177px;width:390px;height:334.500px;background:linear-gradient(90deg,#0a46d2 0%,#0a46d2 50%,#131c86 50%);border-radius:7px 7px 0 0"></div>
<div class="a" style="left:66px;top:509px;width:390px;height:2.5px;background:#131c86"></div>
<div class="a" style="left:66px;top:202px;width:3.5px;height:307px;background:linear-gradient(90deg,#0a40cc,#1a5ae0)"></div>
<div class="a" style="left:66px;top:177px;width:390px;height:25px;border-radius:7px 7px 0 0;background:linear-gradient(#1a66ee 0%,#0a58e6 10%,#0650dc 30%,#0448d0 60%,#0648d4 85%,#0a4cd8 100%)"></div>
<div class="a" style="left:69.5px;top:202px;width:384px;height:307px;background:#efecdc"></div>
<div class="a" style="left:69.5px;top:508px;width:384px;height:1px;background:#c4d0f2"></div>
<div class="a" style="left:452.5px;top:202px;width:1px;height:307px;background:#c4d0f2"></div>
<div class="t" style="left:72.3px;top:186.1px;font-size:11.5px;font-family:'Liberation Serif','Noto Serif CJK SC',serif;font-weight:900;color:#fff;text-shadow:1px 1px 0 #0a2a80;transform-origin:0 50%;transform:scaleX(1.028)">选择颜色</div>
<div class="a" style="left:433.500px;top:181.500px;width:18px;height:18px;border:1px solid #fff;border-radius:3px;background:linear-gradient(135deg,#f09070 0%,#e2582c 45%,#c43c14 100%)"></div>
<svg class="a" style="left:437px;top:185px;" width="11" height="11" viewBox="0 0 11 11"><path d="M1.500 1.500L9.500 9.500M9.500 1.500L1.500 9.500" stroke="#fff" stroke-width="2.200"/></svg>
<div class="a" style="left:74px;top:225.500px;width:373.500px;height:249px;background:linear-gradient(#fbfbf7,#f6f5ee);border:1px solid #b9bdc2"></div>
<div class="a" style="left:127px;top:210px;width:59px;height:16px;background:linear-gradient(#fbfbf8,#efede2);border:1px solid #9aa0a8;border-bottom:none;border-radius:3px 3px 0 0"></div>
<div class="a" style="left:187px;top:210px;width:58.500px;height:16px;background:linear-gradient(#fbfbf8,#efede2);border:1px solid #9aa0a8;border-bottom:none;border-radius:3px 3px 0 0"></div>
<div class="a" style="left:74px;top:207px;width:53.500px;height:20px;background:#fbfbf7;border:1px solid #9aa0a8;border-bottom:none;border-top:2.500px solid #f0a030;border-radius:3px 3px 0 0"></div>
<div class="a" style="left:81px;top:210px;width:12.5px;height:12px;background:linear-gradient(135deg,#f0c0c8 0%,#b04050 45%,#3a1018 100%);border:1px solid #4a2830"></div>
<div class="t" style="left:99.3px;top:211.3px;font-size:11.5px;color:#111;transform-origin:0 50%;transform:scaleX(0.883)">模型</div>
<svg class="a" style="left:131px;top:209.5px;" width="14.5" height="14.5" viewBox="0 0 14.5 14.5"><circle cx="7.200" cy="7.200" r="5" fill="none" stroke="#333" stroke-width="3.600"/><path d="M7.200 2.200A5 5 0 0 1 11.500 4.700" stroke="#e8a020" stroke-width="2.400" fill="none"/><path d="M11.500 4.700A5 5 0 0 1 11.500 9.700" stroke="#d83020" stroke-width="2.400" fill="none"/><path d="M11.500 9.700A5 5 0 0 1 7.200 12.200" stroke="#a030a0" stroke-width="2.400" fill="none"/><path d="M7.200 12.200A5 5 0 0 1 2.900 9.700" stroke="#3050c0" stroke-width="2.400" fill="none"/><path d="M2.900 9.700A5 5 0 0 1 2.900 4.700" stroke="#30a0c0" stroke-width="2.400" fill="none"/><path d="M2.900 4.700A5 5 0 0 1 7.200 2.200" stroke="#50b040" stroke-width="2.400" fill="none"/><circle cx="7.200" cy="7.200" r="3" fill="#fff"/></svg>
<div class="t" style="left:150.4px;top:211.7px;font-size:11.5px;color:#111;transform-origin:0 50%;transform:scaleX(0.870)">混和器</div>
<svg class="a" style="left:192.5px;top:210.5px;" width="12" height="12" viewBox="0 0 12 12"><rect width="12" height="12" fill="#1c1c24"/><rect x="1.0" y="1.0" width="2.700" height="2.700" fill="#c82020"/><rect x="4.7" y="1.0" width="2.700" height="2.700" fill="#f0d020"/><rect x="8.4" y="1.0" width="2.700" height="2.700" fill="#30a040"/><rect x="1.0" y="4.7" width="2.700" height="2.700" fill="#2030c0"/><rect x="4.7" y="4.7" width="2.700" height="2.700" fill="#e8e8e8"/><rect x="8.4" y="4.7" width="2.700" height="2.700" fill="#c02080"/><rect x="1.0" y="8.4" width="2.700" height="2.700" fill="#e08020"/><rect x="4.7" y="8.4" width="2.700" height="2.700" fill="#20a0c0"/><rect x="8.4" y="8.4" width="2.700" height="2.700" fill="#802090"/></svg>
<div class="t" style="left:211px;top:211.7px;font-size:11.5px;color:#111;transform-origin:0 50%;transform:scaleX(0.858)">调色板</div>
<div class="t" style="left:82.2px;top:242.5px;font-size:11.5px;color:#111;transform-origin:0 50%;transform:scaleX(0.915)">模型<span style="font-size:9.500px">(<u>E</u>)</span>:</div>
<div class="inp" style="left:123px;top:239.500px;width:167px;height:18px;border-color:#a3b1c9"></div>
<div class="t" style="left:126.3px;top:243.5px;font-size:10px;color:#222;transform-origin:0 50%;transform:scaleX(0.827)">CMYK</div>
<div class="a" style="left:274.5px;top:241.5px;width:13.5px;height:14px;background:linear-gradient(#cfdcfb,#b6c8f5);border-radius:2px"></div>
<svg class="a" style="left:277.25px;top:246.0px;" width="8" height="6" viewBox="0 0 8 6"><path d="M1 1L4 4.300L7 1" fill="none" stroke="#2a3f86" stroke-width="2"/></svg>
<div class="a" style="left:298.400px;top:239.900px;width:18.700px;height:18.700px;border:1.500px solid #5c6c72;border-radius:3.500px;background:#e9ebec"></div>
<svg class="a" style="left:298.4px;top:239.9px;" width="19" height="19" viewBox="0 0 19 19"><path d="M9.200 7.800L11.200 9.800L4.600 15.200L3.800 14.600Z" fill="#8e8e8e" stroke="#5a5a5a" stroke-width="0.500"/><path d="M10.600 7.400L13.600 5" stroke="#1e2226" stroke-width="2.600" stroke-linecap="round"/><path d="M8.500 6.300L11.900 9.700" stroke="#1e2226" stroke-width="2.300" stroke-linecap="round"/></svg>
<div class="a" style="left:322px;top:239.5px;width:116.5px;height:29px;background:#231917"></div>
<div class="a" style="left:322px;top:268px;width:116.5px;height:30px;background:#020101"></div>
<div class="a" style="left:79.5px;top:263.5px;width:191px;height:208px;background:#fbfaf5"></div>
<div class="a" style="left:83px;top:267px;width:184.5px;height:201px;background:linear-gradient(to bottom,#f5ebf8 0%,#cfc6d1 12%,#a49ca4 25%,#787078 40%,#4a424a 55%,#221a22 70%,#0e080e 82%,#0a0408 100%)"></div>
<div class="a" style="left:83px;top:267px;width:184.500px;height:201px;background:linear-gradient(to bottom,#b254aa 0%,#a840a0 20%,#9a2a98 33%,#8c1890 45%,#6a1472 60%,#441050 70%,#200828 80%,#0e040e 90%,#0a0408 100%);-webkit-mask-image:linear-gradient(to right,rgba(0,0,0,0) 0%,rgba(0,0,0,0.34) 20%,rgba(0,0,0,0.6) 40%,rgba(0,0,0,0.86) 70%,#000 100%);mask-image:linear-gradient(to right,rgba(0,0,0,0) 0%,rgba(0,0,0,0.34) 20%,rgba(0,0,0,0.6) 40%,rgba(0,0,0,0.86) 70%,#000 100%)"></div>
<div class="a" style="left:124px;top:442px;width:8.5px;height:8px;border:1px solid #f2f2f2"></div>
<div class="a" style="left:272.5px;top:263.5px;width:18.5px;height:208px;background:#fbfaf5"></div>
<div class="a" style="left:275.5px;top:267px;width:12.5px;height:201px;background:linear-gradient(to bottom,#f01828 0%,#f018a0 9%,#e818e0 15%,#8018e8 25%,#1820e8 33%,#1890e8 42%,#18d8e0 50%,#18e080 58%,#20e020 67%,#a0e018 75%,#e8e018 82%,#f0a018 90%,#f03818 100%)"></div>
<div class="a" style="left:272px;top:298.5px;width:19px;height:4.5px;border:1px solid #111;background:rgba(255,255,255,0.800)"></div>
<div class="btn" style="left:380.3px;top:311px;width:57px;height:14.5px;line-height:11.5px;"></div>
<div class="t" style="left:386.3px;top:312.9px;font-size:11px;color:#111;transform-origin:0 50%;transform:scaleX(0.941)">十六进制</div>
<svg class="a" style="left:429px;top:317px;" width="5" height="3" viewBox="0 0 5 3"><path d="M0 0H5L2.500 3Z" fill="#111"/></svg>
<div class="t" style="left:382.7px;top:334.4px;font-size:9.5px;color:#222;transform-origin:0 50%;transform:scaleX(0.937)">#1D161D</div>
<div class="t" style="left:304px;top:335.8px;font-size:10px;color:#222;transform-origin:0 50%;transform:scaleX(0.760)">C</div>
<div class="inp" style="left:322px;top:332.0px;width:44px;height:19.500px;border-color:#a3b1c9"></div>
<div class="t" style="left:326px;top:336.0px;font-size:10px;color:#222;transform-origin:0 50%;transform:scaleX(0.851)">100</div>
<div class="a" style="left:354.5px;top:334.0px;width:9.5px;height:15.5px;background:#f1efe4"></div>
<svg class="a" style="left:356.5px;top:336.5px;" width="6" height="11" viewBox="0 0 6 11"><path d="M3 0.500V10.500" stroke="#222" stroke-width="1"/><path d="M1.200 4.300L3 2.300L4.800 4.300M1.200 6.700L3 8.700L4.800 6.700" fill="none" stroke="#222" stroke-width="1.100"/></svg>
<div class="t" style="left:304px;top:361.3px;font-size:10px;color:#222;transform-origin:0 50%;transform:scaleX(0.779)">M</div>
<div class="inp" style="left:322px;top:357.5px;width:44px;height:19.500px;border-color:#a3b1c9"></div>
<div class="t" style="left:326px;top:361.5px;font-size:10px;color:#222;transform-origin:0 50%;transform:scaleX(0.854)">99</div>
<div class="a" style="left:354.5px;top:359.5px;width:9.5px;height:15.5px;background:#f1efe4"></div>
<svg class="a" style="left:356.5px;top:362.0px;" width="6" height="11" viewBox="0 0 6 11"><path d="M3 0.500V10.500" stroke="#222" stroke-width="1"/><path d="M1.200 4.300L3 2.300L4.800 4.300M1.200 6.700L3 8.700L4.800 6.700" fill="none" stroke="#222" stroke-width="1.100"/></svg>
<div class="t" style="left:304px;top:386.8px;font-size:10px;color:#222;transform-origin:0 50%;transform:scaleX(0.824)">Y</div>
<div class="inp" style="left:322px;top:383.0px;width:44px;height:19.500px;border-color:#a3b1c9"></div>
<div class="t" style="left:326px;top:387.0px;font-size:10px;color:#222;transform-origin:0 50%;transform:scaleX(0.854)">53</div>
<div class="a" style="left:354.5px;top:385.0px;width:9.5px;height:15.5px;background:#f1efe4"></div>
<svg class="a" style="left:356.5px;top:387.5px;" width="6" height="11" viewBox="0 0 6 11"><path d="M3 0.500V10.500" stroke="#222" stroke-width="1"/><path d="M1.200 4.300L3 2.300L4.800 4.300M1.200 6.700L3 8.700L4.800 6.700" fill="none" stroke="#222" stroke-width="1.100"/></svg>
<div class="t" style="left:304px;top:412.3px;font-size:10px;color:#222;transform-origin:0 50%;transform:scaleX(0.824)">K</div>
<div class="inp" style="left:322px;top:408.5px;width:44px;height:19.500px;border-color:#a3b1c9"></div>
<div class="t" style="left:326px;top:412.5px;font-size:10px;color:#222;transform-origin:0 50%;transform:scaleX(0.854)">60</div>
<div class="a" style="left:336.3px;top:412.5px;width:1px;height:11px;background:#000"></div>
<div class="a" style="left:354.5px;top:410.5px;width:9.5px;height:15.5px;background:#f1efe4"></div>
<svg class="a" style="left:356.5px;top:413.0px;" width="6" height="11" viewBox="0 0 6 11"><path d="M3 0.500V10.500" stroke="#222" stroke-width="1"/><path d="M1.200 4.300L3 2.300L4.800 4.300M1.200 6.700L3 8.700L4.800 6.700" fill="none" stroke="#222" stroke-width="1.100"/></svg>
<div class="t" style="left:304px;top:433.7px;font-size:11.5px;color:#111;transform-origin:0 50%;transform:scaleX(0.923)">名称<span style="font-size:9.500px">(<u>N</u>)</span>:</div>
<div class="inp" style="left:303.500px;top:448px;width:135px;height:18px;border-color:#a3b1c9"></div>
<div class="a" style="left:423px;top:450px;width:13.5px;height:14px;background:linear-gradient(#cfdcfb,#b6c8f5);border-radius:2px"></div>
<svg class="a" style="left:425.75px;top:454.5px;" width="8" height="6" viewBox="0 0 8 6"><path d="M1 1L4 4.300L7 1" fill="none" stroke="#2a3f86" stroke-width="2"/></svg>
<div class="btn" style="left:74.5px;top:484px;width:79px;height:17.5px;line-height:14.5px;"></div>
<div class="t" style="left:81px;top:487.5px;font-size:11.5px;color:#111;transform-origin:0 50%;transform:scaleX(0.929)">加到调色板<span style="font-size:9.500px">(<u>A</u>)</span></div>
<div class="btn" style="left:155.5px;top:484px;width:11px;height:17.5px;line-height:14.5px;"></div>
<svg class="a" style="left:157.5px;top:490px;" width="7" height="5" viewBox="0 0 7 5"><path d="M0 0H7L3.500 4.500Z" fill="#111"/></svg>
<div class="btn" style="left:173.5px;top:484px;width:63px;height:17.5px;line-height:14.5px;"></div>
<div class="t" style="left:182px;top:487.5px;font-size:11.5px;color:#111;transform-origin:0 50%;transform:scaleX(0.922)">选项<span style="font-size:9.500px">(<u>P</u>)</span></div>
<svg class="a" style="left:220.5px;top:491px;" width="6" height="4" viewBox="0 0 6 4"><path d="M0 0H6L3 4Z" fill="#111"/></svg>
<div class="btn" style="left:243px;top:484px;width:63.5px;height:18px;line-height:15px;border-color:#1a3a8a;box-shadow:inset 0 0 0 1.500px #b4c8f4"></div>
<div class="t" style="left:263.7px;top:487.3px;font-size:11.5px;color:#111;transform-origin:0 50%;transform:scaleX(0.935)">确定</div>
<div class="btn" style="left:313.5px;top:484px;width:63.5px;height:18px;line-height:15px;"></div>
<div class="t" style="left:334px;top:487.3px;font-size:11.5px;color:#111;transform-origin:0 50%;transform:scaleX(0.887)">取消</div>
<div class="btn" style="left:384px;top:484px;width:63.5px;height:18px;line-height:15px;"></div>
<div class="t" style="left:404.4px;top:487.3px;font-size:11.5px;color:#111;transform-origin:0 50%;transform:scaleX(0.887)">帮助</div>
</body></html>
